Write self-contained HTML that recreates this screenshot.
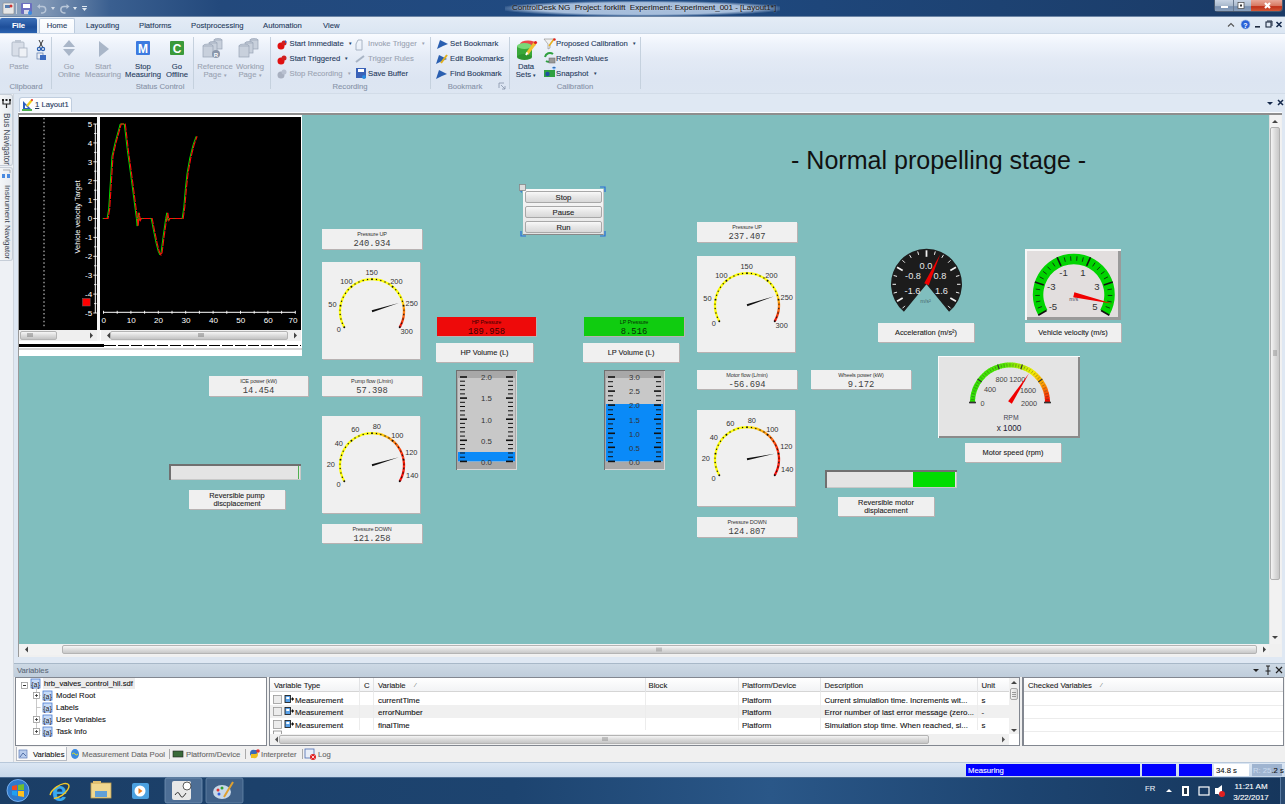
<!DOCTYPE html><html><head><meta charset="utf-8"><style>
html,body{margin:0;padding:0;width:1285px;height:804px;overflow:hidden;background:#dfe8f3;}
body{position:relative;font-family:"Liberation Sans",sans-serif;}
body>div,body>div>div{position:absolute;}
.b{-webkit-text-stroke:0.1px currentColor;}
</style></head><body>
<div style="left:0px;top:0px;width:1285px;height:17px;background:linear-gradient(90deg,#95a9c2 0px,#7a92b2 50px,#3a5f90 110px,#23497c 220px,#1f4a82 640px,#1d4272 1000px,#1a3a66 1285px);"></div>
<div style="left:505px;top:1px;width:275px;height:15px;background:radial-gradient(ellipse at center,rgba(190,210,235,0.85) 55%,rgba(150,180,215,0) 75%);"></div>
<div style="left:0px;top:16px;width:1285px;height:1px;background:#6d86a6;"></div>
<svg style="position:absolute;left:0px;top:0px;" width="120" height="17" viewBox="0 0 120 17">
<rect x="3" y="3" width="11" height="11" rx="1" fill="#e6e6e6" stroke="#8a8a8a" stroke-width="0.6"/>
<rect x="5" y="5" width="5" height="3" fill="#5a7fb0"/><circle cx="11" cy="6" r="1.5" fill="#c33"/>
<line x1="16.5" y1="3" x2="16.5" y2="14" stroke="#c8d2de" stroke-width="1"/>
<rect x="21" y="3" width="11" height="11" rx="1" fill="#6b6fc0"/><rect x="23" y="4" width="7" height="4" fill="#fff"/><rect x="24" y="10" width="5" height="4" fill="#d8d8e8"/><circle cx="30" cy="13" r="2" fill="#3a8ae0"/>
<path d="M39.5 6.5 h3 a3.2 3.2 0 0 1 0 6.4 h-1.5" fill="none" stroke="#b8c6d8" stroke-width="1.5"/><path d="M37 6.5 l3-2.6 v5.2z" fill="#b8c6d8"/>
<path d="M51 7 l4 0 l-2 3z" fill="#d0dae6"/>
<path d="M67 6.5 h-3 a3.2 3.2 0 0 0 0 6.4 h1.5" fill="none" stroke="#b8c6d8" stroke-width="1.5"/><path d="M69.5 6.5 l-3-2.6 v5.2z" fill="#b8c6d8"/>
<path d="M73 7 l4 0 l-2 3z" fill="#e0e8f0"/>
<rect x="82" y="6" width="5" height="1" fill="#e0e8f0"/><path d="M82 8 l5 0 l-2.5 3z" fill="#e0e8f0"/>
</svg>
<div style="left:1214px;top:0px;width:69px;height:12px;border:1px solid #4a5a70;border-top:none;border-radius:0 0 4px 4px;box-sizing:border-box;"></div>
<div style="left:1215px;top:0px;width:18px;height:11px;background:linear-gradient(#c8d4e4,#a8b8cc 55%,#7890b0 60%,#8aa0bc);"></div>
<div style="left:1233px;top:0px;width:1px;height:11px;background:#6a7a90;"></div>
<div style="left:1234px;top:0px;width:17px;height:11px;background:linear-gradient(#c8d4e4,#a8b8cc 55%,#7890b0 60%,#8aa0bc);"></div>
<div style="left:1251px;top:0px;width:31px;height:11px;background:linear-gradient(#e8a898,#d87a64 50%,#c03018 60%,#d05838);border-radius:0 0 3px 0;"></div>
<svg style="position:absolute;left:1214px;top:0px;" width="69" height="12" viewBox="0 0 69 12"><rect x="7" y="6" width="7" height="2" fill="#fff"/><rect x="24" y="2.5" width="6" height="6" fill="#fff" stroke="#444" stroke-width="0.7"/><rect x="26" y="4.5" width="2" height="2" fill="#333"/><path d="M51 3 l5 5 M56 3 l-5 5" stroke="#fff" stroke-width="2.2"/></svg>
<div class="b" style="left:512px;top:3px;font-size:8.0px;line-height:9.6px;color:#1a1a1a;text-align:left;white-space:nowrap;text-shadow:0 0 2px rgba(255,255,255,0.6);">ControlDesk NG&nbsp; Project: forklift&nbsp; Experiment: Experiment_001 - [Layout1*]</div>
<div style="left:0px;top:17px;width:1285px;height:17px;background:linear-gradient(#e4ecf6,#dae5f2);"></div>
<div style="left:0px;top:18px;width:37px;height:15px;background:linear-gradient(#3c6fb8,#1e4f9a 60%,#2a62b0);border-radius:2px 2px 0 0;"></div>
<div class="b" style="left:0px;top:18px;width:37px;font-size:7.7px;line-height:15px;color:#fff;text-align:center;white-space:nowrap;font-weight:bold;">File</div>
<div style="left:39px;top:18px;width:36px;height:16px;background:linear-gradient(#fdfeff,#f3f7fc);border:1px solid #bccbdd;border-bottom:none;border-radius:2px 2px 0 0;box-sizing:border-box;"></div>
<div class="b" style="left:39px;top:18px;width:36px;font-size:7.7px;line-height:16px;color:#1e395b;text-align:center;white-space:nowrap;">Home</div>
<div class="b" style="left:86px;top:18px;font-size:7.7px;line-height:16px;color:#1e395b;text-align:left;white-space:nowrap;">Layouting</div>
<div class="b" style="left:139px;top:18px;font-size:7.7px;line-height:16px;color:#1e395b;text-align:left;white-space:nowrap;">Platforms</div>
<div class="b" style="left:191px;top:18px;font-size:7.7px;line-height:16px;color:#1e395b;text-align:left;white-space:nowrap;">Postprocessing</div>
<div class="b" style="left:263px;top:18px;font-size:7.7px;line-height:16px;color:#1e395b;text-align:left;white-space:nowrap;">Automation</div>
<div class="b" style="left:323px;top:18px;font-size:7.7px;line-height:16px;color:#1e395b;text-align:left;white-space:nowrap;">View</div>
<svg style="position:absolute;left:1220px;top:18px;" width="65" height="14" viewBox="0 0 65 14"><path d="M8 8.5 l3-3 l3 3" fill="none" stroke="#555" stroke-width="1.1"/><circle cx="25.5" cy="6.5" r="4.5" fill="#2a62d8" stroke="#a8c0e8" stroke-width="0.6"/><text x="25.5" y="9.5" font-size="7" fill="#fff" text-anchor="middle" font-family="Liberation Sans" font-weight="bold">?</text><rect x="35" y="8" width="5" height="1.6" fill="#1e2a40"/><rect x="46" y="4" width="5" height="5" fill="none" stroke="#1e2a40" stroke-width="1.1"/><path d="M47 3 h5 v5" fill="none" stroke="#1e2a40" stroke-width="1"/><path d="M56.5 4 l5 5 M61.5 4 l-5 5" stroke="#15294b" stroke-width="1.5"/></svg>
<div style="left:0px;top:33px;width:1285px;height:61px;background:linear-gradient(#f9fbff 0px,#eef3fb 10px,#e3eaf5 25px,#dce5f2 45px,#dde6f2 61px);border-top:1px solid #ccd8e6;border-bottom:1px solid #d2dce8;box-sizing:border-box;"></div>
<div style="left:51px;top:37px;width:1px;height:52px;background:#c5d1de;"></div>
<div style="left:193px;top:37px;width:1px;height:52px;background:#c5d1de;"></div>
<div style="left:270px;top:37px;width:1px;height:52px;background:#c5d1de;"></div>
<div style="left:430px;top:37px;width:1px;height:52px;background:#c5d1de;"></div>
<div style="left:509px;top:37px;width:1px;height:52px;background:#c5d1de;"></div>
<div style="left:640px;top:37px;width:1px;height:52px;background:#c5d1de;"></div>
<div class="b" style="left:0px;top:62px;width:38px;font-size:7.7px;line-height:9.24px;color:#9aa3b2;text-align:center;white-space:nowrap;">Paste</div>
<div class="b" style="left:0px;top:82px;width:52px;font-size:7.7px;line-height:9.24px;color:#8793a8;text-align:center;white-space:nowrap;">Clipboard</div>
<svg style="position:absolute;left:8px;top:38px;" width="40" height="22" viewBox="0 0 40 22"><rect x="4" y="4" width="12" height="14" rx="1" fill="#d8dee8" stroke="#a8b2c0" stroke-width="0.8"/><rect x="7" y="2" width="6" height="3" fill="#c0c8d4"/><rect x="11" y="10" width="8" height="9" fill="#eef1f6" stroke="#a8b2c0" stroke-width="0.8"/><path d="M31 2 l4 8 M35 2 l-4 8" stroke="#333" stroke-width="1"/><circle cx="31" cy="11" r="1.6" fill="none" stroke="#2a5fb0" stroke-width="1.2"/><circle cx="35" cy="11" r="1.6" fill="none" stroke="#2a5fb0" stroke-width="1.2"/><rect x="29" y="15" width="6" height="6" fill="#e8ecf4" stroke="#5a78a8" stroke-width="0.7"/><rect x="32" y="17" width="6" height="5" fill="#3a6ac0"/></svg>
<svg style="position:absolute;left:55px;top:36px;" width="140" height="24" viewBox="0 0 140 24"><path d="M14 4 l6 7 l-12 0z" fill="#a9b6c8"/><path d="M8 13 l12 0 l-6 7z" fill="#a9b6c8"/>
<path d="M44 5 l10 8 l-10 8z" fill="#a9b6c8"/>
<rect x="81" y="5" width="14" height="14" rx="1" fill="#3d7ae0"/><text x="88" y="16.5" font-size="12" font-weight="bold" fill="#fff" text-anchor="middle" font-family="Liberation Sans">M</text>
<rect x="115" y="5" width="14" height="14" rx="1" fill="#3a9a3a"/><text x="122" y="16.5" font-size="12" font-weight="bold" fill="#fff" text-anchor="middle" font-family="Liberation Sans">C</text></svg>
<div class="b" style="left:52px;top:62.5px;width:34px;font-size:7.7px;line-height:8.4px;color:#9aa3b2;text-align:center;white-space:nowrap;">Go<br>Online</div>
<div class="b" style="left:84px;top:62.5px;width:38px;font-size:7.7px;line-height:8.4px;color:#9aa3b2;text-align:center;white-space:nowrap;">Start<br>Measuring</div>
<div class="b" style="left:124px;top:62.5px;width:38px;font-size:7.7px;line-height:8.4px;color:#1e395b;text-align:center;white-space:nowrap;">Stop<br>Measuring</div>
<div class="b" style="left:160px;top:62.5px;width:34px;font-size:7.7px;line-height:8.4px;color:#1e395b;text-align:center;white-space:nowrap;">Go<br>Offline</div>
<div class="b" style="left:110px;top:82px;width:100px;font-size:7.7px;line-height:9.24px;color:#8793a8;text-align:center;white-space:nowrap;">Status Control</div>
<svg style="position:absolute;left:198px;top:36px;" width="72" height="24" viewBox="0 0 72 24"><g fill="#c8d0dc" stroke="#98a4b6" stroke-width="0.7"><ellipse cx="20" cy="4" rx="4" ry="1.5"/><rect x="16" y="4" width="8" height="9"/><ellipse cx="15" cy="7" rx="4" ry="1.5"/><rect x="11" y="7" width="8" height="10"/><ellipse cx="10" cy="10" rx="5" ry="2"/><rect x="5" y="10" width="10" height="11"/></g><circle cx="18" cy="18" r="4" fill="#8a96aa"/><text x="18" y="21" font-size="6" fill="#fff" text-anchor="middle" font-family="Liberation Sans" font-weight="bold">R</text>
<g fill="#c8d0dc" stroke="#98a4b6" stroke-width="0.7"><ellipse cx="56" cy="4" rx="4" ry="1.5"/><rect x="52" y="4" width="8" height="9"/><ellipse cx="51" cy="7" rx="4" ry="1.5"/><rect x="47" y="7" width="8" height="10"/><ellipse cx="46" cy="10" rx="5" ry="2"/><rect x="41" y="10" width="10" height="11"/></g></svg>
<div class="b" style="left:196px;top:62.5px;width:38px;font-size:7.7px;line-height:8.4px;color:#9aa3b2;text-align:center;white-space:nowrap;">Reference<br>Page <span style="font-size:5px">▾</span></div>
<div class="b" style="left:231px;top:62.5px;width:38px;font-size:7.7px;line-height:8.4px;color:#9aa3b2;text-align:center;white-space:nowrap;">Working<br>Page <span style="font-size:5px">▾</span></div>
<svg style="position:absolute;left:272px;top:37px;" width="160" height="44" viewBox="0 0 160 44"><circle cx="9" cy="9" r="3.5" fill="#e01010"/><circle cx="12" cy="6" r="2.5" fill="#d02020"/><path d="M13 3 l2 2 l-2 1z" fill="#3060c0"/>
<circle cx="9" cy="24" r="3.5" fill="#e01010"/><circle cx="12" cy="21" r="2.5" fill="#d02020"/>
<circle cx="9" cy="38" r="3.5" fill="#a8b0c0"/><circle cx="12" cy="35" r="2.5" fill="#b8c0d0"/>
<path d="M86 3 l4 0 l0 10 l-6 0 l0-6z" fill="none" stroke="#a8b4c4" stroke-width="1"/>
<path d="M84 25 l8 -6" stroke="#a8b4c4" stroke-width="2"/>
<rect x="84" y="31" width="10" height="10" fill="#3a62b8"/><rect x="86" y="32" width="6" height="3" fill="#fff"/><circle cx="92" cy="40" r="2" fill="#2a8ae0"/></svg>
<div class="b" style="left:289.5px;top:39px;font-size:7.7px;line-height:9.24px;color:#1e395b;text-align:left;white-space:nowrap;">Start Immediate <span style="font-size:5px;vertical-align:1px;margin-left:3px">▾</span></div>
<div class="b" style="left:289.5px;top:54px;font-size:7.7px;line-height:9.24px;color:#1e395b;text-align:left;white-space:nowrap;">Start Triggered <span style="font-size:5px;vertical-align:1px;margin-left:3px">▾</span></div>
<div class="b" style="left:289.5px;top:68.8px;font-size:7.7px;line-height:9.24px;color:#9aa3b2;text-align:left;white-space:nowrap;">Stop Recording <span style="font-size:5px;vertical-align:1px;margin-left:3px">▾</span></div>
<div class="b" style="left:368px;top:39px;font-size:7.7px;line-height:9.24px;color:#9aa3b2;text-align:left;white-space:nowrap;">Invoke Trigger <span style="font-size:5px;vertical-align:1px;margin-left:3px">▾</span></div>
<div class="b" style="left:368px;top:54px;font-size:7.7px;line-height:9.24px;color:#9aa3b2;text-align:left;white-space:nowrap;">Trigger Rules</div>
<div class="b" style="left:368px;top:68.8px;font-size:7.7px;line-height:9.24px;color:#1e395b;text-align:left;white-space:nowrap;">Save Buffer</div>
<div class="b" style="left:300px;top:82px;width:100px;font-size:7.7px;line-height:9.24px;color:#8793a8;text-align:center;white-space:nowrap;">Recording</div>
<svg style="position:absolute;left:433px;top:37px;" width="16" height="44" viewBox="0 0 16 44"><path d="M4 12 l3-9 l8 4 l-5 2z" fill="#2a5fb0"/><path d="M3 27 l3-9 l8 4 l-5 2z" fill="#2a5fb0"/><path d="M8 26 l6-8" stroke="#e0b020" stroke-width="2"/><path d="M3 42 l3-9 l8 4 l-5 2z" fill="#2a5fb0"/></svg>
<div class="b" style="left:450px;top:39px;font-size:7.7px;line-height:9.24px;color:#1e395b;text-align:left;white-space:nowrap;">Set Bookmark</div>
<div class="b" style="left:450px;top:54px;font-size:7.7px;line-height:9.24px;color:#1e395b;text-align:left;white-space:nowrap;">Edit Bookmarks</div>
<div class="b" style="left:450px;top:68.8px;font-size:7.7px;line-height:9.24px;color:#1e395b;text-align:left;white-space:nowrap;">Find Bookmark</div>
<div class="b" style="left:430px;top:82px;width:70px;font-size:7.7px;line-height:9.24px;color:#8793a8;text-align:center;white-space:nowrap;">Bookmark</div>
<svg style="position:absolute;left:498px;top:82px;" width="8" height="8" viewBox="0 0 8 8"><path d="M1 1 h5 M1 1 v5 M3 3 l4 4 M7 4 v3 h-3" stroke="#8793a8" stroke-width="0.8" fill="none"/></svg>
<svg style="position:absolute;left:515px;top:37px;" width="125" height="44" viewBox="0 0 125 44"><ellipse cx="13" cy="7" rx="8" ry="3.5" fill="#e84848"/><rect x="2" y="9" width="15" height="11" fill="#3aa83a"/><ellipse cx="9.5" cy="20" rx="7.5" ry="3" fill="#2e942e"/><ellipse cx="9.5" cy="9" rx="7.5" ry="3" fill="#78d878"/><path d="M12 17 l8-11" stroke="#f0c030" stroke-width="3"/><path d="M11 18 l1.5-2.5" stroke="#fff" stroke-width="2"/><circle cx="20.5" cy="5.5" r="1.6" fill="#e02020"/>
<path d="M29 2 l10 0 l-4 5 l0 4 l-2 1 l0-5z" fill="#f0f0f0" stroke="#888" stroke-width="0.6"/><path d="M34 9 l5-7" stroke="#e8b020" stroke-width="1.5"/><circle cx="39.5" cy="2.5" r="1.2" fill="#e02020"/>
<path d="M30 20 a5 5 0 0 1 8 -3" fill="none" stroke="#30a040" stroke-width="2"/><path d="M38 22 a5 5 0 0 1 -7 2" fill="none" stroke="#30a040" stroke-width="2"/><rect x="34" y="21" width="6" height="5" fill="#999" stroke="#666" stroke-width="0.5"/>
<rect x="29" y="33" width="11" height="7" fill="#30a040"/><circle cx="32.5" cy="37" r="2.2" fill="#2050a0"/><path d="M37 30 l2 2 l2-2 M39 29 v4 M37 31 h4" stroke="#70b0ff" stroke-width="0.8"/></svg>
<div class="b" style="left:498px;top:62.5px;width:56px;font-size:7.7px;line-height:8.4px;color:#1e395b;text-align:center;white-space:nowrap;">Data<br>Sets <span style="font-size:5px">▾</span></div>
<div class="b" style="left:556px;top:39px;font-size:7.7px;line-height:9.24px;color:#1e395b;text-align:left;white-space:nowrap;">Proposed Calibration <span style="font-size:5px;vertical-align:1px;margin-left:3px">▾</span></div>
<div class="b" style="left:556px;top:54px;font-size:7.7px;line-height:9.24px;color:#1e395b;text-align:left;white-space:nowrap;">Refresh Values</div>
<div class="b" style="left:556px;top:68.8px;font-size:7.7px;line-height:9.24px;color:#1e395b;text-align:left;white-space:nowrap;">Snapshot <span style="font-size:5px;vertical-align:1px;margin-left:3px">▾</span></div>
<div class="b" style="left:540px;top:82px;width:70px;font-size:7.7px;line-height:9.24px;color:#8793a8;text-align:center;white-space:nowrap;">Calibration</div>
<div style="left:0px;top:94px;width:1285px;height:20px;background:#dfe8f3;"></div>
<div style="left:0px;top:94px;width:14px;height:668px;background:#eef1f5;border-right:1px solid #d0d6de;box-sizing:border-box;"></div>
<div style="left:0px;top:94px;width:13px;height:72px;background:linear-gradient(90deg,#f4f6f8,#e6eaef);border:1px solid #c6ced8;border-left:none;border-radius:0 3px 3px 0;box-sizing:border-box;"></div>
<div style="left:0px;top:167px;width:13px;height:94px;background:linear-gradient(90deg,#f4f6f8,#e6eaef);border:1px solid #c6ced8;border-left:none;border-radius:0 3px 3px 0;box-sizing:border-box;"></div>
<svg style="position:absolute;left:1px;top:98px;" width="11" height="11" viewBox="0 0 11 11"><path d="M2 2 v4 h7 v-4 M5.5 6 v4" stroke="#222" stroke-width="1.2" fill="none"/><rect x="1" y="1" width="2" height="2" fill="#222"/><rect x="4.5" y="1" width="2" height="2" fill="#222"/><rect x="8" y="1" width="2" height="2" fill="#222"/></svg>
<svg style="position:absolute;left:1px;top:169px;" width="11" height="11" viewBox="0 0 11 11"><rect x="1" y="5" width="3" height="4" fill="#4a8ae0"/><rect x="6" y="5" width="3" height="4" fill="#4a8ae0"/><path d="M2 1 h7 v3" stroke="#999" fill="none" stroke-width="0.8"/></svg>
<div style="left:1px;top:112.5px;width:12px;height:54px;"><div style="position:absolute;left:12px;top:0;transform-origin:0 0;transform:rotate(90deg);font-size:8.3px;line-height:12px;color:#3a4450;white-space:nowrap;">Bus Navigator</div></div>
<div style="left:1px;top:185px;width:12px;height:80px;"><div style="position:absolute;left:12px;top:0;transform-origin:0 0;transform:rotate(90deg);font-size:8.0px;line-height:12px;color:#3a4450;white-space:nowrap;">Instrument Navigator</div></div>
<div style="left:19px;top:97px;width:53px;height:17px;background:linear-gradient(#ffffff,#f6f9fd);border:1px solid #c0cedf;border-bottom:none;border-radius:3px 3px 0 0;box-sizing:border-box;"></div>
<svg style="position:absolute;left:22px;top:99px;" width="12" height="12" viewBox="0 0 12 12"><path d="M1 10 L1 2 L9 10 Z" fill="#2a5fc0"/><path d="M3 9 L3 6 L6 9Z" fill="#fff"/><rect x="0" y="10" width="10" height="2" fill="#50b050"/><path d="M5 7 L10 1" stroke="#f0d020" stroke-width="2.2"/><circle cx="10" cy="1" r="1" fill="#e03030"/></svg>
<div class="b" style="left:35px;top:98px;font-size:7.7px;line-height:14px;color:#1e395b;text-align:left;white-space:nowrap;"><u>1</u> Layout1</div>
<svg style="position:absolute;left:1265px;top:96px;" width="30" height="14" viewBox="0 0 30 14"><path d="M2 6 h6 l-3 3z" fill="#15294b"/><path d="M13 4 l5 5 M18 4 l-5 5" stroke="#15294b" stroke-width="1.5"/></svg>
<div style="left:14px;top:113px;width:1271px;height:550px;background:#dfe8f3;"></div>
<div style="left:18px;top:112px;width:1264px;height:1px;background:#fafcff;"></div>
<div style="left:18px;top:113px;width:1264px;height:544px;background:#f0f0f0;border-top:2px solid #8e8e8e;border-left:1px solid #9a9a9a;box-sizing:border-box;"></div>
<div style="left:19px;top:115px;width:1250px;height:529px;background:#80bebe;"></div>
<div style="left:1269px;top:115px;width:12px;height:529px;background:#f2f2f2;border-left:1px solid #e0e0e0;box-sizing:border-box;"></div>
<div style="left:1270px;top:127px;width:10px;height:453px;background:linear-gradient(90deg,#f4f4f4,#dcdcdc 50%,#c8c8c8);border:1px solid #b0b0b0;border-radius:2px;box-sizing:border-box;"></div>
<svg style="position:absolute;left:1269px;top:115px;" width="12" height="529" viewBox="0 0 12 529"><path d="M3 8 l3-3 l3 3z" fill="#444"/><path d="M3 521 l6 0 l-3 3z" fill="#444"/><path d="M4 236 h4 M4 238 h4 M4 240 h4" stroke="#777" stroke-width="0.7"/></svg>
<div style="left:19px;top:644px;width:1250px;height:11px;background:#f2f2f2;"></div>
<div style="left:62px;top:645px;width:1195px;height:9px;background:linear-gradient(#f6f6f6,#dedede 50%,#c8c8c8);border:1px solid #b4b4b4;border-radius:2px;box-sizing:border-box;"></div>
<svg style="position:absolute;left:19px;top:644px;" width="1250" height="11" viewBox="0 0 1250 11"><path d="M6 5.5 l3-3 l0 6z" fill="#444"/><path d="M1244 2.5 l3 3 l-3 3z" fill="#444"/><path d="M638 3.5 v4 M640 3.5 v4 M642 3.5 v4" stroke="#777" stroke-width="0.7"/></svg>
<div style="left:14px;top:657px;width:1271px;height:6px;background:#dfe8f3;"></div>
<div style="left:19px;top:115px;width:283px;height:241px;background:#fff;"></div>
<div style="left:19px;top:117px;width:79px;height:213px;background:#000;"></div>
<div style="left:100px;top:117px;width:201px;height:213px;background:#000;"></div>
<div style="left:97px;top:117px;width:3px;height:224px;background:#f4f4f4;"></div>
<svg style="position:absolute;left:19px;top:115px;" width="283" height="241" viewBox="0 0 283 241"><line x1="25" y1="3" x2="25" y2="213" stroke="#ddd" stroke-width="1" stroke-dasharray="1.5,2.4"/><line x1="76.3" y1="9.0" x2="76.3" y2="198.0" stroke="#fff" stroke-width="1"/><line x1="74.3" y1="198.0" x2="77.8" y2="198.0" stroke="#fff" stroke-width="0.9"/><line x1="75.1" y1="188.6" x2="77.5" y2="188.6" stroke="#fff" stroke-width="0.9"/><line x1="74.3" y1="179.1" x2="77.8" y2="179.1" stroke="#fff" stroke-width="0.9"/><line x1="75.1" y1="169.6" x2="77.5" y2="169.6" stroke="#fff" stroke-width="0.9"/><line x1="74.3" y1="160.2" x2="77.8" y2="160.2" stroke="#fff" stroke-width="0.9"/><line x1="75.1" y1="150.8" x2="77.5" y2="150.8" stroke="#fff" stroke-width="0.9"/><line x1="74.3" y1="141.3" x2="77.8" y2="141.3" stroke="#fff" stroke-width="0.9"/><line x1="75.1" y1="131.8" x2="77.5" y2="131.8" stroke="#fff" stroke-width="0.9"/><line x1="74.3" y1="122.4" x2="77.8" y2="122.4" stroke="#fff" stroke-width="0.9"/><line x1="75.1" y1="113.0" x2="77.5" y2="113.0" stroke="#fff" stroke-width="0.9"/><line x1="74.3" y1="103.5" x2="77.8" y2="103.5" stroke="#fff" stroke-width="0.9"/><line x1="75.1" y1="94.0" x2="77.5" y2="94.0" stroke="#fff" stroke-width="0.9"/><line x1="74.3" y1="84.6" x2="77.8" y2="84.6" stroke="#fff" stroke-width="0.9"/><line x1="75.1" y1="75.2" x2="77.5" y2="75.2" stroke="#fff" stroke-width="0.9"/><line x1="74.3" y1="65.7" x2="77.8" y2="65.7" stroke="#fff" stroke-width="0.9"/><line x1="75.1" y1="56.2" x2="77.5" y2="56.2" stroke="#fff" stroke-width="0.9"/><line x1="74.3" y1="46.8" x2="77.8" y2="46.8" stroke="#fff" stroke-width="0.9"/><line x1="75.1" y1="37.4" x2="77.5" y2="37.4" stroke="#fff" stroke-width="0.9"/><line x1="74.3" y1="27.9" x2="77.8" y2="27.9" stroke="#fff" stroke-width="0.9"/><line x1="75.1" y1="18.5" x2="77.5" y2="18.5" stroke="#fff" stroke-width="0.9"/><line x1="74.3" y1="9.0" x2="77.8" y2="9.0" stroke="#fff" stroke-width="0.9"/><text x="73.3" y="200.9" font-size="8.1" fill="#fff" text-anchor="end" font-family="Liberation Sans">-5</text><text x="73.3" y="182.0" font-size="8.1" fill="#fff" text-anchor="end" font-family="Liberation Sans">-4</text><text x="73.3" y="163.1" font-size="8.1" fill="#fff" text-anchor="end" font-family="Liberation Sans">-3</text><text x="73.3" y="144.2" font-size="8.1" fill="#fff" text-anchor="end" font-family="Liberation Sans">-2</text><text x="73.3" y="125.3" font-size="8.1" fill="#fff" text-anchor="end" font-family="Liberation Sans">-1</text><text x="73.3" y="106.4" font-size="8.1" fill="#fff" text-anchor="end" font-family="Liberation Sans">0</text><text x="73.3" y="87.5" font-size="8.1" fill="#fff" text-anchor="end" font-family="Liberation Sans">1</text><text x="73.3" y="68.6" font-size="8.1" fill="#fff" text-anchor="end" font-family="Liberation Sans">2</text><text x="73.3" y="49.7" font-size="8.1" fill="#fff" text-anchor="end" font-family="Liberation Sans">3</text><text x="73.3" y="30.8" font-size="8.1" fill="#fff" text-anchor="end" font-family="Liberation Sans">4</text><text x="73.3" y="11.9" font-size="8.1" fill="#fff" text-anchor="end" font-family="Liberation Sans">5</text><text transform="translate(61,102) rotate(-90)" font-size="7.4" fill="#fff" text-anchor="middle" font-family="Liberation Sans">Vehicle velocity Target</text><rect x="63.5" y="183.4" width="7.7" height="7.6" fill="#ff0000" stroke="#666" stroke-width="0.5"/><line x1="84.5" y1="197.3" x2="276.3" y2="197.3" stroke="#fff" stroke-width="1"/><line x1="84.5" y1="195.8" x2="84.5" y2="198.8" stroke="#fff" stroke-width="0.9"/><line x1="98.2" y1="195.8" x2="98.2" y2="198.8" stroke="#fff" stroke-width="0.9"/><line x1="111.9" y1="195.8" x2="111.9" y2="198.8" stroke="#fff" stroke-width="0.9"/><line x1="125.6" y1="195.8" x2="125.6" y2="198.8" stroke="#fff" stroke-width="0.9"/><line x1="139.3" y1="195.8" x2="139.3" y2="198.8" stroke="#fff" stroke-width="0.9"/><line x1="153.0" y1="195.8" x2="153.0" y2="198.8" stroke="#fff" stroke-width="0.9"/><line x1="166.7" y1="195.8" x2="166.7" y2="198.8" stroke="#fff" stroke-width="0.9"/><line x1="180.4" y1="195.8" x2="180.4" y2="198.8" stroke="#fff" stroke-width="0.9"/><line x1="194.1" y1="195.8" x2="194.1" y2="198.8" stroke="#fff" stroke-width="0.9"/><line x1="207.8" y1="195.8" x2="207.8" y2="198.8" stroke="#fff" stroke-width="0.9"/><line x1="221.5" y1="195.8" x2="221.5" y2="198.8" stroke="#fff" stroke-width="0.9"/><line x1="235.2" y1="195.8" x2="235.2" y2="198.8" stroke="#fff" stroke-width="0.9"/><line x1="248.9" y1="195.8" x2="248.9" y2="198.8" stroke="#fff" stroke-width="0.9"/><line x1="262.6" y1="195.8" x2="262.6" y2="198.8" stroke="#fff" stroke-width="0.9"/><line x1="276.3" y1="195.8" x2="276.3" y2="198.8" stroke="#fff" stroke-width="0.9"/><text x="84.8" y="208.10000000000002" font-size="8.1" fill="#fff" text-anchor="middle" font-family="Liberation Sans">0</text><text x="112.2" y="208.10000000000002" font-size="8.1" fill="#fff" text-anchor="middle" font-family="Liberation Sans">10</text><text x="139.6" y="208.10000000000002" font-size="8.1" fill="#fff" text-anchor="middle" font-family="Liberation Sans">20</text><text x="167.0" y="208.10000000000002" font-size="8.1" fill="#fff" text-anchor="middle" font-family="Liberation Sans">30</text><text x="194.4" y="208.10000000000002" font-size="8.1" fill="#fff" text-anchor="middle" font-family="Liberation Sans">40</text><text x="221.8" y="208.10000000000002" font-size="8.1" fill="#fff" text-anchor="middle" font-family="Liberation Sans">50</text><text x="249.2" y="208.10000000000002" font-size="8.1" fill="#fff" text-anchor="middle" font-family="Liberation Sans">60</text><text x="274.1" y="208.10000000000002" font-size="8.1" fill="#fff" text-anchor="middle" font-family="Liberation Sans">70</text><path d="M84.5,103.5 L88.9,103.5 L90.5,94.0 L93.8,41.1 L96.8,27.9 L102.0,9.0 L106.1,9.0 L109.2,35.5 L113.3,65.7 L118.2,103.5 L119.0,111.1 L120.1,97.8 L121.2,105.4 L122.3,103.5 L133.0,103.5 L135.2,114.8 L137.9,128.1 L140.1,136.6 L141.8,140.0 L142.9,137.5 L144.8,122.4 L147.5,103.5 L148.6,97.8 L149.7,105.4 L150.8,103.5 L164.0,103.5 L165.6,92.2 L167.2,73.3 L168.9,58.1 L171.6,43.0 L174.9,29.8 L177.9,21.3" fill="none" stroke="#00e000" stroke-width="1.0" transform="translate(-0.8,0)"/><path d="M84.5,103.5 L88.9,103.5 L90.5,94.0 L93.8,41.1 L96.8,27.9 L102.0,9.0 L106.1,9.0 L109.2,35.5 L113.3,65.7 L118.2,103.5 L119.0,111.1 L120.1,97.8 L121.2,105.4 L122.3,103.5 L133.0,103.5 L135.2,114.8 L137.9,128.1 L140.1,136.6 L141.8,140.0 L142.9,137.5 L144.8,122.4 L147.5,103.5 L148.6,97.8 L149.7,105.4 L150.8,103.5 L164.0,103.5 L165.6,92.2 L167.2,73.3 L168.9,58.1 L171.6,43.0 L174.9,29.8 L177.9,21.3" fill="none" stroke="#ff0a0a" stroke-width="1.1" stroke-dasharray="7,1" transform="translate(0.2,0)"/></svg>
<div style="left:19px;top:330px;width:78px;height:11px;background:#efefef;"></div>
<div style="left:20px;top:331px;width:37px;height:9px;background:linear-gradient(#f6f6f6,#dcdcdc 50%,#c4c4c4);border:1px solid #b4b4b4;border-radius:2px;box-sizing:border-box;"></div>
<div style="left:101px;top:330px;width:200px;height:11px;background:#efefef;"></div>
<div style="left:110px;top:331px;width:178px;height:9px;background:linear-gradient(#f6f6f6,#dcdcdc 50%,#c4c4c4);border:1px solid #b4b4b4;border-radius:2px;box-sizing:border-box;"></div>
<svg style="position:absolute;left:19px;top:330px;" width="283" height="11" viewBox="0 0 283 11"><path d="M9 3 v4 M11 3 v4 M13 3 v4" stroke="#666" stroke-width="0.8"/><path d="M71 2.5 l3 3 l-3 3z" fill="#444"/><path d="M88 5.5 l3-3 v6z" fill="#444"/><path d="M180 3 v4 M182 3 v4 M184 3 v4" stroke="#666" stroke-width="0.8"/><path d="M275 2.5 l3 3 l-3 3z" fill="#444"/></svg>
<div style="left:19px;top:344px;width:85px;height:3px;background:#000;"></div>
<div style="left:104px;top:345px;width:197px;height:1px;background:#000;"></div>
<svg style="position:absolute;left:104px;top:344px;" width="197" height="3" viewBox="0 0 197 3"><rect x="12" y="0" width="2" height="3" fill="#fff"/><rect x="25" y="0" width="2" height="3" fill="#fff"/><rect x="38" y="0" width="2" height="3" fill="#fff"/><rect x="51" y="0" width="2" height="3" fill="#fff"/><rect x="64" y="0" width="2" height="3" fill="#fff"/><rect x="77" y="0" width="2" height="3" fill="#fff"/><rect x="90" y="0" width="2" height="3" fill="#fff"/><rect x="103" y="0" width="2" height="3" fill="#fff"/><rect x="116" y="0" width="2" height="3" fill="#fff"/><rect x="129" y="0" width="2" height="3" fill="#fff"/><rect x="142" y="0" width="2" height="3" fill="#fff"/><rect x="155" y="0" width="2" height="3" fill="#fff"/><rect x="168" y="0" width="2" height="3" fill="#fff"/><rect x="181" y="0" width="2" height="3" fill="#fff"/><rect x="194" y="0" width="2" height="3" fill="#fff"/></svg>
<div style="left:19px;top:348px;width:283px;height:2px;background:#d4d4d4;"></div>
<div style="left:322px;top:229px;width:100px;height:20px;background:#f0f0f0;box-shadow:1px 1px 0 #b8b2b2;"></div>
<div style="left:322px;top:230.5px;width:100px;font-size:5.5px;line-height:6px;color:#333;text-align:center;white-space:nowrap;letter-spacing:-0.15px;">Pressure UP</div>
<div style="left:322px;top:238.6px;width:100px;font-size:8.8px;line-height:11px;color:#404040;text-align:center;white-space:nowrap;font-family:'Liberation Mono',monospace;">240.934</div>
<div style="left:322px;top:262px;width:98px;height:97px;background:#f0f0f0;box-shadow:1px 1px 0 #b8b2b2;"></div>
<svg style="position:absolute;left:322px;top:262px;" width="98" height="97" viewBox="0 0 98 97"><path d="M22.29,65.20 A32,32 0 0 1 21.24,63.23" stroke="#ffff00" stroke-width="2.3" fill="none"/><path d="M21.24,63.23 A32,32 0 0 1 20.33,61.19" stroke="#ffff00" stroke-width="2.3" fill="none"/><path d="M20.33,61.19 A32,32 0 0 1 19.57,59.09" stroke="#ffff00" stroke-width="2.3" fill="none"/><path d="M19.57,59.09 A32,32 0 0 1 18.95,56.94" stroke="#ffff00" stroke-width="2.3" fill="none"/><path d="M18.95,56.94 A32,32 0 0 1 18.49,54.76" stroke="#ffff00" stroke-width="2.3" fill="none"/><path d="M18.49,54.76 A32,32 0 0 1 18.18,52.54" stroke="#ffff00" stroke-width="2.3" fill="none"/><path d="M18.18,52.54 A32,32 0 0 1 18.02,50.32" stroke="#ffff00" stroke-width="2.3" fill="none"/><path d="M18.02,50.32 A32,32 0 0 1 18.02,48.08" stroke="#ffff00" stroke-width="2.3" fill="none"/><path d="M18.02,48.08 A32,32 0 0 1 18.18,45.86" stroke="#ffff00" stroke-width="2.3" fill="none"/><path d="M18.18,45.86 A32,32 0 0 1 18.49,43.64" stroke="#ffff00" stroke-width="2.3" fill="none"/><path d="M18.49,43.64 A32,32 0 0 1 18.95,41.46" stroke="#ffff00" stroke-width="2.3" fill="none"/><path d="M18.95,41.46 A32,32 0 0 1 19.57,39.31" stroke="#ffff00" stroke-width="2.3" fill="none"/><path d="M19.57,39.31 A32,32 0 0 1 20.33,37.21" stroke="#ffff00" stroke-width="2.3" fill="none"/><path d="M20.33,37.21 A32,32 0 0 1 21.24,35.17" stroke="#ffff00" stroke-width="2.3" fill="none"/><path d="M21.24,35.17 A32,32 0 0 1 22.29,33.20" stroke="#ffff00" stroke-width="2.3" fill="none"/><path d="M22.29,33.20 A32,32 0 0 1 23.47,31.31" stroke="#ffff00" stroke-width="2.3" fill="none"/><path d="M23.47,31.31 A32,32 0 0 1 24.78,29.50" stroke="#ffff00" stroke-width="2.3" fill="none"/><path d="M24.78,29.50 A32,32 0 0 1 26.22,27.79" stroke="#ffff00" stroke-width="2.3" fill="none"/><path d="M26.22,27.79 A32,32 0 0 1 27.77,26.18" stroke="#ffff00" stroke-width="2.3" fill="none"/><path d="M27.77,26.18 A32,32 0 0 1 29.43,24.69" stroke="#ffff00" stroke-width="2.3" fill="none"/><path d="M29.43,24.69 A32,32 0 0 1 31.19,23.31" stroke="#ffff00" stroke-width="2.3" fill="none"/><path d="M31.19,23.31 A32,32 0 0 1 33.04,22.06" stroke="#ffff00" stroke-width="2.3" fill="none"/><path d="M33.04,22.06 A32,32 0 0 1 34.98,20.95" stroke="#ffff00" stroke-width="2.3" fill="none"/><path d="M34.98,20.95 A32,32 0 0 1 36.98,19.97" stroke="#ffff00" stroke-width="2.3" fill="none"/><path d="M36.98,19.97 A32,32 0 0 1 39.06,19.13" stroke="#ffff00" stroke-width="2.3" fill="none"/><path d="M39.06,19.13 A32,32 0 0 1 41.18,18.44" stroke="#ffff00" stroke-width="2.3" fill="none"/><path d="M41.18,18.44 A32,32 0 0 1 43.35,17.90" stroke="#ffff00" stroke-width="2.3" fill="none"/><path d="M43.35,17.90 A32,32 0 0 1 45.55,17.51" stroke="#ffff00" stroke-width="2.3" fill="none"/><path d="M45.55,17.51 A32,32 0 0 1 47.77,17.28" stroke="#ffff00" stroke-width="2.3" fill="none"/><path d="M47.77,17.28 A32,32 0 0 1 50.00,17.20" stroke="#ffff00" stroke-width="2.3" fill="none"/><path d="M50.00,17.20 A32,32 0 0 1 52.23,17.28" stroke="#ffff00" stroke-width="2.3" fill="none"/><path d="M52.23,17.28 A32,32 0 0 1 54.45,17.51" stroke="#ffff00" stroke-width="2.3" fill="none"/><path d="M54.45,17.51 A32,32 0 0 1 56.65,17.90" stroke="#ffff00" stroke-width="2.3" fill="none"/><path d="M56.65,17.90 A32,32 0 0 1 58.82,18.44" stroke="#ffff00" stroke-width="2.3" fill="none"/><path d="M58.82,18.44 A32,32 0 0 1 60.94,19.13" stroke="#ffff00" stroke-width="2.3" fill="none"/><path d="M60.94,19.13 A32,32 0 0 1 63.02,19.97" stroke="#ffff00" stroke-width="2.3" fill="none"/><path d="M63.02,19.97 A32,32 0 0 1 65.02,20.95" stroke="#ffff00" stroke-width="2.3" fill="none"/><path d="M65.02,20.95 A32,32 0 0 1 66.96,22.06" stroke="#ffff00" stroke-width="2.3" fill="none"/><path d="M66.96,22.06 A32,32 0 0 1 68.81,23.31" stroke="#ffff00" stroke-width="2.3" fill="none"/><path d="M68.81,23.31 A32,32 0 0 1 70.57,24.69" stroke="#ffff00" stroke-width="2.3" fill="none"/><path d="M70.57,24.69 A32,32 0 0 1 72.23,26.18" stroke="#ffff00" stroke-width="2.3" fill="none"/><path d="M72.23,26.18 A32,32 0 0 1 73.78,27.79" stroke="#ffff00" stroke-width="2.3" fill="none"/><path d="M73.78,27.79 A32,32 0 0 1 75.22,29.50" stroke="#ffff00" stroke-width="2.3" fill="none"/><path d="M75.22,29.50 A32,32 0 0 1 76.53,31.31" stroke="#ffff00" stroke-width="2.3" fill="none"/><path d="M76.53,31.31 A32,32 0 0 1 77.71,33.20" stroke="#ffff00" stroke-width="2.3" fill="none"/><path d="M77.71,33.20 A32,32 0 0 1 78.76,35.17" stroke="#ffff00" stroke-width="2.3" fill="none"/><path d="M78.76,35.17 A32,32 0 0 1 79.67,37.21" stroke="#ffff00" stroke-width="2.3" fill="none"/><path d="M79.67,37.21 A32,32 0 0 1 80.43,39.31" stroke="#ffee00" stroke-width="2.3" fill="none"/><path d="M80.43,39.31 A32,32 0 0 1 81.05,41.46" stroke="#ffd600" stroke-width="2.3" fill="none"/><path d="M81.05,41.46 A32,32 0 0 1 81.51,43.64" stroke="#ffbe00" stroke-width="2.3" fill="none"/><path d="M81.51,43.64 A32,32 0 0 1 81.82,45.86" stroke="#ffa600" stroke-width="2.3" fill="none"/><path d="M81.82,45.86 A32,32 0 0 1 81.98,48.08" stroke="#ff8e00" stroke-width="2.3" fill="none"/><path d="M81.98,48.08 A32,32 0 0 1 81.98,50.32" stroke="#fc7c00" stroke-width="2.3" fill="none"/><path d="M81.98,50.32 A32,32 0 0 1 81.82,52.54" stroke="#f96c00" stroke-width="2.3" fill="none"/><path d="M81.82,52.54 A32,32 0 0 1 81.51,54.76" stroke="#f65b00" stroke-width="2.3" fill="none"/><path d="M81.51,54.76 A32,32 0 0 1 81.05,56.94" stroke="#f34a00" stroke-width="2.3" fill="none"/><path d="M81.05,56.94 A32,32 0 0 1 80.43,59.09" stroke="#f03a00" stroke-width="2.3" fill="none"/><path d="M80.43,59.09 A32,32 0 0 1 79.67,61.19" stroke="#ed2900" stroke-width="2.3" fill="none"/><path d="M79.67,61.19 A32,32 0 0 1 78.76,63.23" stroke="#ea1900" stroke-width="2.3" fill="none"/><path d="M78.76,63.23 A32,32 0 0 1 77.71,65.20" stroke="#e70800" stroke-width="2.3" fill="none"/><circle cx="22.29" cy="65.20" r="0.95" fill="#111"/><circle cx="20.33" cy="61.19" r="0.7" fill="#111"/><circle cx="18.95" cy="56.94" r="0.7" fill="#111"/><circle cx="18.18" cy="52.54" r="0.7" fill="#111"/><circle cx="18.02" cy="48.08" r="0.7" fill="#111"/><circle cx="18.49" cy="43.64" r="0.95" fill="#111"/><circle cx="19.57" cy="39.31" r="0.7" fill="#111"/><circle cx="21.24" cy="35.17" r="0.7" fill="#111"/><circle cx="23.47" cy="31.31" r="0.7" fill="#111"/><circle cx="26.22" cy="27.79" r="0.7" fill="#111"/><circle cx="29.43" cy="24.69" r="0.95" fill="#111"/><circle cx="33.04" cy="22.06" r="0.7" fill="#111"/><circle cx="36.98" cy="19.97" r="0.7" fill="#111"/><circle cx="41.18" cy="18.44" r="0.7" fill="#111"/><circle cx="45.55" cy="17.51" r="0.7" fill="#111"/><circle cx="50.00" cy="17.20" r="0.95" fill="#111"/><circle cx="54.45" cy="17.51" r="0.7" fill="#111"/><circle cx="58.82" cy="18.44" r="0.7" fill="#111"/><circle cx="63.02" cy="19.97" r="0.7" fill="#111"/><circle cx="66.96" cy="22.06" r="0.7" fill="#111"/><circle cx="70.57" cy="24.69" r="0.95" fill="#111"/><circle cx="73.78" cy="27.79" r="0.7" fill="#111"/><circle cx="76.53" cy="31.31" r="0.7" fill="#111"/><circle cx="78.76" cy="35.17" r="0.7" fill="#111"/><circle cx="80.43" cy="39.31" r="0.7" fill="#111"/><circle cx="81.51" cy="43.64" r="0.95" fill="#111"/><circle cx="81.98" cy="48.08" r="0.7" fill="#111"/><circle cx="81.82" cy="52.54" r="0.7" fill="#111"/><circle cx="81.05" cy="56.94" r="0.7" fill="#111"/><circle cx="79.67" cy="61.19" r="0.7" fill="#111"/><circle cx="77.71" cy="65.20" r="0.95" fill="#111"/><text x="16.9" y="69.7" font-size="7.4" fill="#333" text-anchor="middle" font-family="Liberation Sans">0</text><text x="10.4" y="44.9" font-size="7.4" fill="#333" text-anchor="middle" font-family="Liberation Sans">50</text><text x="24.4" y="21.6" font-size="7.4" fill="#333" text-anchor="middle" font-family="Liberation Sans">100</text><text x="49.6" y="12.8" font-size="7.4" fill="#333" text-anchor="middle" font-family="Liberation Sans">150</text><text x="74.4" y="21.6" font-size="7.4" fill="#333" text-anchor="middle" font-family="Liberation Sans">200</text><text x="89.7" y="44.2" font-size="7.4" fill="#333" text-anchor="middle" font-family="Liberation Sans">250</text><text x="84.6" y="71.6" font-size="7.4" fill="#333" text-anchor="middle" font-family="Liberation Sans">300</text><path d="M49.71,48.24 L76.78,41.01 L50.29,50.16 Z" fill="#111"/></svg>
<div style="left:209px;top:376px;width:99px;height:20px;background:#f0f0f0;box-shadow:1px 1px 0 #b8b2b2;"></div>
<div style="left:209px;top:377.5px;width:99px;font-size:5.5px;line-height:6px;color:#333;text-align:center;white-space:nowrap;letter-spacing:-0.15px;">ICE power (kW)</div>
<div style="left:209px;top:385.6px;width:99px;font-size:8.8px;line-height:11px;color:#404040;text-align:center;white-space:nowrap;font-family:'Liberation Mono',monospace;">14.454</div>
<div style="left:322px;top:376px;width:100px;height:20px;background:#f0f0f0;box-shadow:1px 1px 0 #b8b2b2;"></div>
<div style="left:322px;top:377.5px;width:100px;font-size:5.5px;line-height:6px;color:#333;text-align:center;white-space:nowrap;letter-spacing:-0.15px;">Pump flow (L/min)</div>
<div style="left:322px;top:385.6px;width:100px;font-size:8.8px;line-height:11px;color:#404040;text-align:center;white-space:nowrap;font-family:'Liberation Mono',monospace;">57.398</div>
<div style="left:322px;top:416px;width:98px;height:97px;background:#f0f0f0;box-shadow:1px 1px 0 #b8b2b2;"></div>
<svg style="position:absolute;left:322px;top:416px;" width="98" height="97" viewBox="0 0 98 97"><path d="M22.29,65.20 A32,32 0 0 1 21.24,63.23" stroke="#ffff00" stroke-width="2.3" fill="none"/><path d="M21.24,63.23 A32,32 0 0 1 20.33,61.19" stroke="#ffff00" stroke-width="2.3" fill="none"/><path d="M20.33,61.19 A32,32 0 0 1 19.57,59.09" stroke="#ffff00" stroke-width="2.3" fill="none"/><path d="M19.57,59.09 A32,32 0 0 1 18.95,56.94" stroke="#ffff00" stroke-width="2.3" fill="none"/><path d="M18.95,56.94 A32,32 0 0 1 18.49,54.76" stroke="#ffff00" stroke-width="2.3" fill="none"/><path d="M18.49,54.76 A32,32 0 0 1 18.18,52.54" stroke="#ffff00" stroke-width="2.3" fill="none"/><path d="M18.18,52.54 A32,32 0 0 1 18.02,50.32" stroke="#ffff00" stroke-width="2.3" fill="none"/><path d="M18.02,50.32 A32,32 0 0 1 18.02,48.08" stroke="#ffff00" stroke-width="2.3" fill="none"/><path d="M18.02,48.08 A32,32 0 0 1 18.18,45.86" stroke="#ffff00" stroke-width="2.3" fill="none"/><path d="M18.18,45.86 A32,32 0 0 1 18.49,43.64" stroke="#ffff00" stroke-width="2.3" fill="none"/><path d="M18.49,43.64 A32,32 0 0 1 18.95,41.46" stroke="#ffff00" stroke-width="2.3" fill="none"/><path d="M18.95,41.46 A32,32 0 0 1 19.57,39.31" stroke="#ffff00" stroke-width="2.3" fill="none"/><path d="M19.57,39.31 A32,32 0 0 1 20.33,37.21" stroke="#ffff00" stroke-width="2.3" fill="none"/><path d="M20.33,37.21 A32,32 0 0 1 21.24,35.17" stroke="#ffff00" stroke-width="2.3" fill="none"/><path d="M21.24,35.17 A32,32 0 0 1 22.29,33.20" stroke="#ffff00" stroke-width="2.3" fill="none"/><path d="M22.29,33.20 A32,32 0 0 1 23.47,31.31" stroke="#ffff00" stroke-width="2.3" fill="none"/><path d="M23.47,31.31 A32,32 0 0 1 24.78,29.50" stroke="#ffff00" stroke-width="2.3" fill="none"/><path d="M24.78,29.50 A32,32 0 0 1 26.22,27.79" stroke="#ffff00" stroke-width="2.3" fill="none"/><path d="M26.22,27.79 A32,32 0 0 1 27.77,26.18" stroke="#ffff00" stroke-width="2.3" fill="none"/><path d="M27.77,26.18 A32,32 0 0 1 29.43,24.69" stroke="#ffff00" stroke-width="2.3" fill="none"/><path d="M29.43,24.69 A32,32 0 0 1 31.19,23.31" stroke="#ffff00" stroke-width="2.3" fill="none"/><path d="M31.19,23.31 A32,32 0 0 1 33.04,22.06" stroke="#ffff00" stroke-width="2.3" fill="none"/><path d="M33.04,22.06 A32,32 0 0 1 34.98,20.95" stroke="#ffff00" stroke-width="2.3" fill="none"/><path d="M34.98,20.95 A32,32 0 0 1 36.98,19.97" stroke="#ffff00" stroke-width="2.3" fill="none"/><path d="M36.98,19.97 A32,32 0 0 1 39.06,19.13" stroke="#ffff00" stroke-width="2.3" fill="none"/><path d="M39.06,19.13 A32,32 0 0 1 41.18,18.44" stroke="#ffff00" stroke-width="2.3" fill="none"/><path d="M41.18,18.44 A32,32 0 0 1 43.35,17.90" stroke="#ffff00" stroke-width="2.3" fill="none"/><path d="M43.35,17.90 A32,32 0 0 1 45.55,17.51" stroke="#ffff00" stroke-width="2.3" fill="none"/><path d="M45.55,17.51 A32,32 0 0 1 47.77,17.28" stroke="#ffff00" stroke-width="2.3" fill="none"/><path d="M47.77,17.28 A32,32 0 0 1 50.00,17.20" stroke="#ffff00" stroke-width="2.3" fill="none"/><path d="M50.00,17.20 A32,32 0 0 1 52.23,17.28" stroke="#fff900" stroke-width="2.3" fill="none"/><path d="M52.23,17.28 A32,32 0 0 1 54.45,17.51" stroke="#ffed00" stroke-width="2.3" fill="none"/><path d="M54.45,17.51 A32,32 0 0 1 56.65,17.90" stroke="#ffe100" stroke-width="2.3" fill="none"/><path d="M56.65,17.90 A32,32 0 0 1 58.82,18.44" stroke="#ffd500" stroke-width="2.3" fill="none"/><path d="M58.82,18.44 A32,32 0 0 1 60.94,19.13" stroke="#ffc900" stroke-width="2.3" fill="none"/><path d="M60.94,19.13 A32,32 0 0 1 63.02,19.97" stroke="#ffbe00" stroke-width="2.3" fill="none"/><path d="M63.02,19.97 A32,32 0 0 1 65.02,20.95" stroke="#ffb200" stroke-width="2.3" fill="none"/><path d="M65.02,20.95 A32,32 0 0 1 66.96,22.06" stroke="#fea500" stroke-width="2.3" fill="none"/><path d="M66.96,22.06 A32,32 0 0 1 68.81,23.31" stroke="#fd9800" stroke-width="2.3" fill="none"/><path d="M68.81,23.31 A32,32 0 0 1 70.57,24.69" stroke="#fc8a00" stroke-width="2.3" fill="none"/><path d="M70.57,24.69 A32,32 0 0 1 72.23,26.18" stroke="#fb7d00" stroke-width="2.3" fill="none"/><path d="M72.23,26.18 A32,32 0 0 1 73.78,27.79" stroke="#fa6f00" stroke-width="2.3" fill="none"/><path d="M73.78,27.79 A32,32 0 0 1 75.22,29.50" stroke="#f96200" stroke-width="2.3" fill="none"/><path d="M75.22,29.50 A32,32 0 0 1 76.53,31.31" stroke="#f85400" stroke-width="2.3" fill="none"/><path d="M76.53,31.31 A32,32 0 0 1 77.71,33.20" stroke="#f74700" stroke-width="2.3" fill="none"/><path d="M77.71,33.20 A32,32 0 0 1 78.76,35.17" stroke="#f63900" stroke-width="2.3" fill="none"/><path d="M78.76,35.17 A32,32 0 0 1 79.67,37.21" stroke="#f52c00" stroke-width="2.3" fill="none"/><path d="M79.67,37.21 A32,32 0 0 1 80.43,39.31" stroke="#f42500" stroke-width="2.3" fill="none"/><path d="M80.43,39.31 A32,32 0 0 1 81.05,41.46" stroke="#f42200" stroke-width="2.3" fill="none"/><path d="M81.05,41.46 A32,32 0 0 1 81.51,43.64" stroke="#f31f00" stroke-width="2.3" fill="none"/><path d="M81.51,43.64 A32,32 0 0 1 81.82,45.86" stroke="#f31c00" stroke-width="2.3" fill="none"/><path d="M81.82,45.86 A32,32 0 0 1 81.98,48.08" stroke="#f31900" stroke-width="2.3" fill="none"/><path d="M81.98,48.08 A32,32 0 0 1 81.98,50.32" stroke="#f21600" stroke-width="2.3" fill="none"/><path d="M81.98,50.32 A32,32 0 0 1 81.82,52.54" stroke="#f21300" stroke-width="2.3" fill="none"/><path d="M81.82,52.54 A32,32 0 0 1 81.51,54.76" stroke="#f21000" stroke-width="2.3" fill="none"/><path d="M81.51,54.76 A32,32 0 0 1 81.05,56.94" stroke="#f10d00" stroke-width="2.3" fill="none"/><path d="M81.05,56.94 A32,32 0 0 1 80.43,59.09" stroke="#f10a00" stroke-width="2.3" fill="none"/><path d="M80.43,59.09 A32,32 0 0 1 79.67,61.19" stroke="#f00700" stroke-width="2.3" fill="none"/><path d="M79.67,61.19 A32,32 0 0 1 78.76,63.23" stroke="#f00400" stroke-width="2.3" fill="none"/><path d="M78.76,63.23 A32,32 0 0 1 77.71,65.20" stroke="#f00100" stroke-width="2.3" fill="none"/><circle cx="22.29" cy="65.20" r="0.95" fill="#111"/><circle cx="20.33" cy="61.19" r="0.7" fill="#111"/><circle cx="18.95" cy="56.94" r="0.7" fill="#111"/><circle cx="18.18" cy="52.54" r="0.7" fill="#111"/><circle cx="18.02" cy="48.08" r="0.7" fill="#111"/><circle cx="18.49" cy="43.64" r="0.95" fill="#111"/><circle cx="19.57" cy="39.31" r="0.7" fill="#111"/><circle cx="21.24" cy="35.17" r="0.7" fill="#111"/><circle cx="23.47" cy="31.31" r="0.7" fill="#111"/><circle cx="26.22" cy="27.79" r="0.7" fill="#111"/><circle cx="29.43" cy="24.69" r="0.95" fill="#111"/><circle cx="33.04" cy="22.06" r="0.7" fill="#111"/><circle cx="36.98" cy="19.97" r="0.7" fill="#111"/><circle cx="41.18" cy="18.44" r="0.7" fill="#111"/><circle cx="45.55" cy="17.51" r="0.7" fill="#111"/><circle cx="50.00" cy="17.20" r="0.95" fill="#111"/><circle cx="54.45" cy="17.51" r="0.7" fill="#111"/><circle cx="58.82" cy="18.44" r="0.7" fill="#111"/><circle cx="63.02" cy="19.97" r="0.7" fill="#111"/><circle cx="66.96" cy="22.06" r="0.7" fill="#111"/><circle cx="70.57" cy="24.69" r="0.95" fill="#111"/><circle cx="73.78" cy="27.79" r="0.7" fill="#111"/><circle cx="76.53" cy="31.31" r="0.7" fill="#111"/><circle cx="78.76" cy="35.17" r="0.7" fill="#111"/><circle cx="80.43" cy="39.31" r="0.7" fill="#111"/><circle cx="81.51" cy="43.64" r="0.95" fill="#111"/><circle cx="81.98" cy="48.08" r="0.7" fill="#111"/><circle cx="81.82" cy="52.54" r="0.7" fill="#111"/><circle cx="81.05" cy="56.94" r="0.7" fill="#111"/><circle cx="79.67" cy="61.19" r="0.7" fill="#111"/><circle cx="77.71" cy="65.20" r="0.95" fill="#111"/><text x="16.5" y="71.0" font-size="7.4" fill="#333" text-anchor="middle" font-family="Liberation Sans">0</text><text x="8.8" y="50.6" font-size="7.4" fill="#333" text-anchor="middle" font-family="Liberation Sans">20</text><text x="16.8" y="29.9" font-size="7.4" fill="#333" text-anchor="middle" font-family="Liberation Sans">40</text><text x="33.3" y="15.9" font-size="7.4" fill="#333" text-anchor="middle" font-family="Liberation Sans">60</text><text x="54.8" y="12.7" font-size="7.4" fill="#333" text-anchor="middle" font-family="Liberation Sans">80</text><text x="75.3" y="21.5" font-size="7.4" fill="#333" text-anchor="middle" font-family="Liberation Sans">100</text><text x="89.3" y="39.2" font-size="7.4" fill="#333" text-anchor="middle" font-family="Liberation Sans">120</text><text x="90.2" y="61.6" font-size="7.4" fill="#333" text-anchor="middle" font-family="Liberation Sans">140</text><path d="M49.72,48.24 L76.85,41.25 L50.28,50.16 Z" fill="#111"/></svg>
<div style="left:322px;top:524px;width:100px;height:19px;background:#f0f0f0;box-shadow:1px 1px 0 #b8b2b2;"></div>
<div style="left:322px;top:525.5px;width:100px;font-size:5.5px;line-height:6px;color:#333;text-align:center;white-space:nowrap;letter-spacing:-0.15px;">Pressure DOWN</div>
<div style="left:322px;top:533.6px;width:100px;font-size:8.8px;line-height:11px;color:#404040;text-align:center;white-space:nowrap;font-family:'Liberation Mono',monospace;">121.258</div>
<div style="left:697px;top:222px;width:100px;height:20px;background:#f0f0f0;box-shadow:1px 1px 0 #b8b2b2;"></div>
<div style="left:697px;top:223.5px;width:100px;font-size:5.5px;line-height:6px;color:#333;text-align:center;white-space:nowrap;letter-spacing:-0.15px;">Pressure UP</div>
<div style="left:697px;top:231.6px;width:100px;font-size:8.8px;line-height:11px;color:#404040;text-align:center;white-space:nowrap;font-family:'Liberation Mono',monospace;">237.407</div>
<div style="left:697px;top:256px;width:98px;height:96px;background:#f0f0f0;box-shadow:1px 1px 0 #b8b2b2;"></div>
<svg style="position:absolute;left:697px;top:256px;" width="98" height="96" viewBox="0 0 98 96"><path d="M22.29,65.20 A32,32 0 0 1 21.24,63.23" stroke="#ffff00" stroke-width="2.3" fill="none"/><path d="M21.24,63.23 A32,32 0 0 1 20.33,61.19" stroke="#ffff00" stroke-width="2.3" fill="none"/><path d="M20.33,61.19 A32,32 0 0 1 19.57,59.09" stroke="#ffff00" stroke-width="2.3" fill="none"/><path d="M19.57,59.09 A32,32 0 0 1 18.95,56.94" stroke="#ffff00" stroke-width="2.3" fill="none"/><path d="M18.95,56.94 A32,32 0 0 1 18.49,54.76" stroke="#ffff00" stroke-width="2.3" fill="none"/><path d="M18.49,54.76 A32,32 0 0 1 18.18,52.54" stroke="#ffff00" stroke-width="2.3" fill="none"/><path d="M18.18,52.54 A32,32 0 0 1 18.02,50.32" stroke="#ffff00" stroke-width="2.3" fill="none"/><path d="M18.02,50.32 A32,32 0 0 1 18.02,48.08" stroke="#ffff00" stroke-width="2.3" fill="none"/><path d="M18.02,48.08 A32,32 0 0 1 18.18,45.86" stroke="#ffff00" stroke-width="2.3" fill="none"/><path d="M18.18,45.86 A32,32 0 0 1 18.49,43.64" stroke="#ffff00" stroke-width="2.3" fill="none"/><path d="M18.49,43.64 A32,32 0 0 1 18.95,41.46" stroke="#ffff00" stroke-width="2.3" fill="none"/><path d="M18.95,41.46 A32,32 0 0 1 19.57,39.31" stroke="#ffff00" stroke-width="2.3" fill="none"/><path d="M19.57,39.31 A32,32 0 0 1 20.33,37.21" stroke="#ffff00" stroke-width="2.3" fill="none"/><path d="M20.33,37.21 A32,32 0 0 1 21.24,35.17" stroke="#ffff00" stroke-width="2.3" fill="none"/><path d="M21.24,35.17 A32,32 0 0 1 22.29,33.20" stroke="#ffff00" stroke-width="2.3" fill="none"/><path d="M22.29,33.20 A32,32 0 0 1 23.47,31.31" stroke="#ffff00" stroke-width="2.3" fill="none"/><path d="M23.47,31.31 A32,32 0 0 1 24.78,29.50" stroke="#ffff00" stroke-width="2.3" fill="none"/><path d="M24.78,29.50 A32,32 0 0 1 26.22,27.79" stroke="#ffff00" stroke-width="2.3" fill="none"/><path d="M26.22,27.79 A32,32 0 0 1 27.77,26.18" stroke="#ffff00" stroke-width="2.3" fill="none"/><path d="M27.77,26.18 A32,32 0 0 1 29.43,24.69" stroke="#ffff00" stroke-width="2.3" fill="none"/><path d="M29.43,24.69 A32,32 0 0 1 31.19,23.31" stroke="#ffff00" stroke-width="2.3" fill="none"/><path d="M31.19,23.31 A32,32 0 0 1 33.04,22.06" stroke="#ffff00" stroke-width="2.3" fill="none"/><path d="M33.04,22.06 A32,32 0 0 1 34.98,20.95" stroke="#ffff00" stroke-width="2.3" fill="none"/><path d="M34.98,20.95 A32,32 0 0 1 36.98,19.97" stroke="#ffff00" stroke-width="2.3" fill="none"/><path d="M36.98,19.97 A32,32 0 0 1 39.06,19.13" stroke="#ffff00" stroke-width="2.3" fill="none"/><path d="M39.06,19.13 A32,32 0 0 1 41.18,18.44" stroke="#ffff00" stroke-width="2.3" fill="none"/><path d="M41.18,18.44 A32,32 0 0 1 43.35,17.90" stroke="#ffff00" stroke-width="2.3" fill="none"/><path d="M43.35,17.90 A32,32 0 0 1 45.55,17.51" stroke="#ffff00" stroke-width="2.3" fill="none"/><path d="M45.55,17.51 A32,32 0 0 1 47.77,17.28" stroke="#ffff00" stroke-width="2.3" fill="none"/><path d="M47.77,17.28 A32,32 0 0 1 50.00,17.20" stroke="#ffff00" stroke-width="2.3" fill="none"/><path d="M50.00,17.20 A32,32 0 0 1 52.23,17.28" stroke="#ffff00" stroke-width="2.3" fill="none"/><path d="M52.23,17.28 A32,32 0 0 1 54.45,17.51" stroke="#ffff00" stroke-width="2.3" fill="none"/><path d="M54.45,17.51 A32,32 0 0 1 56.65,17.90" stroke="#ffff00" stroke-width="2.3" fill="none"/><path d="M56.65,17.90 A32,32 0 0 1 58.82,18.44" stroke="#ffff00" stroke-width="2.3" fill="none"/><path d="M58.82,18.44 A32,32 0 0 1 60.94,19.13" stroke="#ffff00" stroke-width="2.3" fill="none"/><path d="M60.94,19.13 A32,32 0 0 1 63.02,19.97" stroke="#ffff00" stroke-width="2.3" fill="none"/><path d="M63.02,19.97 A32,32 0 0 1 65.02,20.95" stroke="#ffff00" stroke-width="2.3" fill="none"/><path d="M65.02,20.95 A32,32 0 0 1 66.96,22.06" stroke="#ffff00" stroke-width="2.3" fill="none"/><path d="M66.96,22.06 A32,32 0 0 1 68.81,23.31" stroke="#ffff00" stroke-width="2.3" fill="none"/><path d="M68.81,23.31 A32,32 0 0 1 70.57,24.69" stroke="#ffff00" stroke-width="2.3" fill="none"/><path d="M70.57,24.69 A32,32 0 0 1 72.23,26.18" stroke="#ffff00" stroke-width="2.3" fill="none"/><path d="M72.23,26.18 A32,32 0 0 1 73.78,27.79" stroke="#ffff00" stroke-width="2.3" fill="none"/><path d="M73.78,27.79 A32,32 0 0 1 75.22,29.50" stroke="#ffff00" stroke-width="2.3" fill="none"/><path d="M75.22,29.50 A32,32 0 0 1 76.53,31.31" stroke="#ffff00" stroke-width="2.3" fill="none"/><path d="M76.53,31.31 A32,32 0 0 1 77.71,33.20" stroke="#ffff00" stroke-width="2.3" fill="none"/><path d="M77.71,33.20 A32,32 0 0 1 78.76,35.17" stroke="#ffff00" stroke-width="2.3" fill="none"/><path d="M78.76,35.17 A32,32 0 0 1 79.67,37.21" stroke="#ffff00" stroke-width="2.3" fill="none"/><path d="M79.67,37.21 A32,32 0 0 1 80.43,39.31" stroke="#ffee00" stroke-width="2.3" fill="none"/><path d="M80.43,39.31 A32,32 0 0 1 81.05,41.46" stroke="#ffd600" stroke-width="2.3" fill="none"/><path d="M81.05,41.46 A32,32 0 0 1 81.51,43.64" stroke="#ffbe00" stroke-width="2.3" fill="none"/><path d="M81.51,43.64 A32,32 0 0 1 81.82,45.86" stroke="#ffa600" stroke-width="2.3" fill="none"/><path d="M81.82,45.86 A32,32 0 0 1 81.98,48.08" stroke="#ff8e00" stroke-width="2.3" fill="none"/><path d="M81.98,48.08 A32,32 0 0 1 81.98,50.32" stroke="#fc7c00" stroke-width="2.3" fill="none"/><path d="M81.98,50.32 A32,32 0 0 1 81.82,52.54" stroke="#f96c00" stroke-width="2.3" fill="none"/><path d="M81.82,52.54 A32,32 0 0 1 81.51,54.76" stroke="#f65b00" stroke-width="2.3" fill="none"/><path d="M81.51,54.76 A32,32 0 0 1 81.05,56.94" stroke="#f34a00" stroke-width="2.3" fill="none"/><path d="M81.05,56.94 A32,32 0 0 1 80.43,59.09" stroke="#f03a00" stroke-width="2.3" fill="none"/><path d="M80.43,59.09 A32,32 0 0 1 79.67,61.19" stroke="#ed2900" stroke-width="2.3" fill="none"/><path d="M79.67,61.19 A32,32 0 0 1 78.76,63.23" stroke="#ea1900" stroke-width="2.3" fill="none"/><path d="M78.76,63.23 A32,32 0 0 1 77.71,65.20" stroke="#e70800" stroke-width="2.3" fill="none"/><circle cx="22.29" cy="65.20" r="0.95" fill="#111"/><circle cx="20.33" cy="61.19" r="0.7" fill="#111"/><circle cx="18.95" cy="56.94" r="0.7" fill="#111"/><circle cx="18.18" cy="52.54" r="0.7" fill="#111"/><circle cx="18.02" cy="48.08" r="0.7" fill="#111"/><circle cx="18.49" cy="43.64" r="0.95" fill="#111"/><circle cx="19.57" cy="39.31" r="0.7" fill="#111"/><circle cx="21.24" cy="35.17" r="0.7" fill="#111"/><circle cx="23.47" cy="31.31" r="0.7" fill="#111"/><circle cx="26.22" cy="27.79" r="0.7" fill="#111"/><circle cx="29.43" cy="24.69" r="0.95" fill="#111"/><circle cx="33.04" cy="22.06" r="0.7" fill="#111"/><circle cx="36.98" cy="19.97" r="0.7" fill="#111"/><circle cx="41.18" cy="18.44" r="0.7" fill="#111"/><circle cx="45.55" cy="17.51" r="0.7" fill="#111"/><circle cx="50.00" cy="17.20" r="0.95" fill="#111"/><circle cx="54.45" cy="17.51" r="0.7" fill="#111"/><circle cx="58.82" cy="18.44" r="0.7" fill="#111"/><circle cx="63.02" cy="19.97" r="0.7" fill="#111"/><circle cx="66.96" cy="22.06" r="0.7" fill="#111"/><circle cx="70.57" cy="24.69" r="0.95" fill="#111"/><circle cx="73.78" cy="27.79" r="0.7" fill="#111"/><circle cx="76.53" cy="31.31" r="0.7" fill="#111"/><circle cx="78.76" cy="35.17" r="0.7" fill="#111"/><circle cx="80.43" cy="39.31" r="0.7" fill="#111"/><circle cx="81.51" cy="43.64" r="0.95" fill="#111"/><circle cx="81.98" cy="48.08" r="0.7" fill="#111"/><circle cx="81.82" cy="52.54" r="0.7" fill="#111"/><circle cx="81.05" cy="56.94" r="0.7" fill="#111"/><circle cx="79.67" cy="61.19" r="0.7" fill="#111"/><circle cx="77.71" cy="65.20" r="0.95" fill="#111"/><text x="16.9" y="69.7" font-size="7.4" fill="#333" text-anchor="middle" font-family="Liberation Sans">0</text><text x="10.4" y="44.9" font-size="7.4" fill="#333" text-anchor="middle" font-family="Liberation Sans">50</text><text x="24.4" y="21.6" font-size="7.4" fill="#333" text-anchor="middle" font-family="Liberation Sans">100</text><text x="49.6" y="12.8" font-size="7.4" fill="#333" text-anchor="middle" font-family="Liberation Sans">150</text><text x="74.4" y="21.6" font-size="7.4" fill="#333" text-anchor="middle" font-family="Liberation Sans">200</text><text x="89.7" y="44.2" font-size="7.4" fill="#333" text-anchor="middle" font-family="Liberation Sans">250</text><text x="84.6" y="71.6" font-size="7.4" fill="#333" text-anchor="middle" font-family="Liberation Sans">300</text><path d="M49.69,48.25 L76.63,40.55 L50.31,50.15 Z" fill="#111"/></svg>
<div style="left:697px;top:370px;width:100px;height:19px;background:#f0f0f0;box-shadow:1px 1px 0 #b8b2b2;"></div>
<div style="left:697px;top:371.5px;width:100px;font-size:5.5px;line-height:6px;color:#333;text-align:center;white-space:nowrap;letter-spacing:-0.15px;">Motor flow (L/min)</div>
<div style="left:697px;top:379.6px;width:100px;font-size:8.8px;line-height:11px;color:#404040;text-align:center;white-space:nowrap;font-family:'Liberation Mono',monospace;">-56.694</div>
<div style="left:811px;top:370px;width:100px;height:19px;background:#f0f0f0;box-shadow:1px 1px 0 #b8b2b2;"></div>
<div style="left:811px;top:371.5px;width:100px;font-size:5.5px;line-height:6px;color:#333;text-align:center;white-space:nowrap;letter-spacing:-0.15px;">Wheels power (kW)</div>
<div style="left:811px;top:379.6px;width:100px;font-size:8.8px;line-height:11px;color:#404040;text-align:center;white-space:nowrap;font-family:'Liberation Mono',monospace;">9.172</div>
<div style="left:697px;top:410px;width:98px;height:96px;background:#f0f0f0;box-shadow:1px 1px 0 #b8b2b2;"></div>
<svg style="position:absolute;left:697px;top:410px;" width="98" height="96" viewBox="0 0 98 96"><path d="M22.29,65.20 A32,32 0 0 1 21.24,63.23" stroke="#ffff00" stroke-width="2.3" fill="none"/><path d="M21.24,63.23 A32,32 0 0 1 20.33,61.19" stroke="#ffff00" stroke-width="2.3" fill="none"/><path d="M20.33,61.19 A32,32 0 0 1 19.57,59.09" stroke="#ffff00" stroke-width="2.3" fill="none"/><path d="M19.57,59.09 A32,32 0 0 1 18.95,56.94" stroke="#ffff00" stroke-width="2.3" fill="none"/><path d="M18.95,56.94 A32,32 0 0 1 18.49,54.76" stroke="#ffff00" stroke-width="2.3" fill="none"/><path d="M18.49,54.76 A32,32 0 0 1 18.18,52.54" stroke="#ffff00" stroke-width="2.3" fill="none"/><path d="M18.18,52.54 A32,32 0 0 1 18.02,50.32" stroke="#ffff00" stroke-width="2.3" fill="none"/><path d="M18.02,50.32 A32,32 0 0 1 18.02,48.08" stroke="#ffff00" stroke-width="2.3" fill="none"/><path d="M18.02,48.08 A32,32 0 0 1 18.18,45.86" stroke="#ffff00" stroke-width="2.3" fill="none"/><path d="M18.18,45.86 A32,32 0 0 1 18.49,43.64" stroke="#ffff00" stroke-width="2.3" fill="none"/><path d="M18.49,43.64 A32,32 0 0 1 18.95,41.46" stroke="#ffff00" stroke-width="2.3" fill="none"/><path d="M18.95,41.46 A32,32 0 0 1 19.57,39.31" stroke="#ffff00" stroke-width="2.3" fill="none"/><path d="M19.57,39.31 A32,32 0 0 1 20.33,37.21" stroke="#ffff00" stroke-width="2.3" fill="none"/><path d="M20.33,37.21 A32,32 0 0 1 21.24,35.17" stroke="#ffff00" stroke-width="2.3" fill="none"/><path d="M21.24,35.17 A32,32 0 0 1 22.29,33.20" stroke="#ffff00" stroke-width="2.3" fill="none"/><path d="M22.29,33.20 A32,32 0 0 1 23.47,31.31" stroke="#ffff00" stroke-width="2.3" fill="none"/><path d="M23.47,31.31 A32,32 0 0 1 24.78,29.50" stroke="#ffff00" stroke-width="2.3" fill="none"/><path d="M24.78,29.50 A32,32 0 0 1 26.22,27.79" stroke="#ffff00" stroke-width="2.3" fill="none"/><path d="M26.22,27.79 A32,32 0 0 1 27.77,26.18" stroke="#ffff00" stroke-width="2.3" fill="none"/><path d="M27.77,26.18 A32,32 0 0 1 29.43,24.69" stroke="#ffff00" stroke-width="2.3" fill="none"/><path d="M29.43,24.69 A32,32 0 0 1 31.19,23.31" stroke="#ffff00" stroke-width="2.3" fill="none"/><path d="M31.19,23.31 A32,32 0 0 1 33.04,22.06" stroke="#ffff00" stroke-width="2.3" fill="none"/><path d="M33.04,22.06 A32,32 0 0 1 34.98,20.95" stroke="#ffff00" stroke-width="2.3" fill="none"/><path d="M34.98,20.95 A32,32 0 0 1 36.98,19.97" stroke="#ffff00" stroke-width="2.3" fill="none"/><path d="M36.98,19.97 A32,32 0 0 1 39.06,19.13" stroke="#ffff00" stroke-width="2.3" fill="none"/><path d="M39.06,19.13 A32,32 0 0 1 41.18,18.44" stroke="#ffff00" stroke-width="2.3" fill="none"/><path d="M41.18,18.44 A32,32 0 0 1 43.35,17.90" stroke="#ffff00" stroke-width="2.3" fill="none"/><path d="M43.35,17.90 A32,32 0 0 1 45.55,17.51" stroke="#ffff00" stroke-width="2.3" fill="none"/><path d="M45.55,17.51 A32,32 0 0 1 47.77,17.28" stroke="#ffff00" stroke-width="2.3" fill="none"/><path d="M47.77,17.28 A32,32 0 0 1 50.00,17.20" stroke="#ffff00" stroke-width="2.3" fill="none"/><path d="M50.00,17.20 A32,32 0 0 1 52.23,17.28" stroke="#fff900" stroke-width="2.3" fill="none"/><path d="M52.23,17.28 A32,32 0 0 1 54.45,17.51" stroke="#ffed00" stroke-width="2.3" fill="none"/><path d="M54.45,17.51 A32,32 0 0 1 56.65,17.90" stroke="#ffe100" stroke-width="2.3" fill="none"/><path d="M56.65,17.90 A32,32 0 0 1 58.82,18.44" stroke="#ffd500" stroke-width="2.3" fill="none"/><path d="M58.82,18.44 A32,32 0 0 1 60.94,19.13" stroke="#ffc900" stroke-width="2.3" fill="none"/><path d="M60.94,19.13 A32,32 0 0 1 63.02,19.97" stroke="#ffbe00" stroke-width="2.3" fill="none"/><path d="M63.02,19.97 A32,32 0 0 1 65.02,20.95" stroke="#ffb200" stroke-width="2.3" fill="none"/><path d="M65.02,20.95 A32,32 0 0 1 66.96,22.06" stroke="#fea500" stroke-width="2.3" fill="none"/><path d="M66.96,22.06 A32,32 0 0 1 68.81,23.31" stroke="#fd9800" stroke-width="2.3" fill="none"/><path d="M68.81,23.31 A32,32 0 0 1 70.57,24.69" stroke="#fc8a00" stroke-width="2.3" fill="none"/><path d="M70.57,24.69 A32,32 0 0 1 72.23,26.18" stroke="#fb7d00" stroke-width="2.3" fill="none"/><path d="M72.23,26.18 A32,32 0 0 1 73.78,27.79" stroke="#fa6f00" stroke-width="2.3" fill="none"/><path d="M73.78,27.79 A32,32 0 0 1 75.22,29.50" stroke="#f96200" stroke-width="2.3" fill="none"/><path d="M75.22,29.50 A32,32 0 0 1 76.53,31.31" stroke="#f85400" stroke-width="2.3" fill="none"/><path d="M76.53,31.31 A32,32 0 0 1 77.71,33.20" stroke="#f74700" stroke-width="2.3" fill="none"/><path d="M77.71,33.20 A32,32 0 0 1 78.76,35.17" stroke="#f63900" stroke-width="2.3" fill="none"/><path d="M78.76,35.17 A32,32 0 0 1 79.67,37.21" stroke="#f52c00" stroke-width="2.3" fill="none"/><path d="M79.67,37.21 A32,32 0 0 1 80.43,39.31" stroke="#f42500" stroke-width="2.3" fill="none"/><path d="M80.43,39.31 A32,32 0 0 1 81.05,41.46" stroke="#f42200" stroke-width="2.3" fill="none"/><path d="M81.05,41.46 A32,32 0 0 1 81.51,43.64" stroke="#f31f00" stroke-width="2.3" fill="none"/><path d="M81.51,43.64 A32,32 0 0 1 81.82,45.86" stroke="#f31c00" stroke-width="2.3" fill="none"/><path d="M81.82,45.86 A32,32 0 0 1 81.98,48.08" stroke="#f31900" stroke-width="2.3" fill="none"/><path d="M81.98,48.08 A32,32 0 0 1 81.98,50.32" stroke="#f21600" stroke-width="2.3" fill="none"/><path d="M81.98,50.32 A32,32 0 0 1 81.82,52.54" stroke="#f21300" stroke-width="2.3" fill="none"/><path d="M81.82,52.54 A32,32 0 0 1 81.51,54.76" stroke="#f21000" stroke-width="2.3" fill="none"/><path d="M81.51,54.76 A32,32 0 0 1 81.05,56.94" stroke="#f10d00" stroke-width="2.3" fill="none"/><path d="M81.05,56.94 A32,32 0 0 1 80.43,59.09" stroke="#f10a00" stroke-width="2.3" fill="none"/><path d="M80.43,59.09 A32,32 0 0 1 79.67,61.19" stroke="#f00700" stroke-width="2.3" fill="none"/><path d="M79.67,61.19 A32,32 0 0 1 78.76,63.23" stroke="#f00400" stroke-width="2.3" fill="none"/><path d="M78.76,63.23 A32,32 0 0 1 77.71,65.20" stroke="#f00100" stroke-width="2.3" fill="none"/><circle cx="22.29" cy="65.20" r="0.95" fill="#111"/><circle cx="20.33" cy="61.19" r="0.7" fill="#111"/><circle cx="18.95" cy="56.94" r="0.7" fill="#111"/><circle cx="18.18" cy="52.54" r="0.7" fill="#111"/><circle cx="18.02" cy="48.08" r="0.7" fill="#111"/><circle cx="18.49" cy="43.64" r="0.95" fill="#111"/><circle cx="19.57" cy="39.31" r="0.7" fill="#111"/><circle cx="21.24" cy="35.17" r="0.7" fill="#111"/><circle cx="23.47" cy="31.31" r="0.7" fill="#111"/><circle cx="26.22" cy="27.79" r="0.7" fill="#111"/><circle cx="29.43" cy="24.69" r="0.95" fill="#111"/><circle cx="33.04" cy="22.06" r="0.7" fill="#111"/><circle cx="36.98" cy="19.97" r="0.7" fill="#111"/><circle cx="41.18" cy="18.44" r="0.7" fill="#111"/><circle cx="45.55" cy="17.51" r="0.7" fill="#111"/><circle cx="50.00" cy="17.20" r="0.95" fill="#111"/><circle cx="54.45" cy="17.51" r="0.7" fill="#111"/><circle cx="58.82" cy="18.44" r="0.7" fill="#111"/><circle cx="63.02" cy="19.97" r="0.7" fill="#111"/><circle cx="66.96" cy="22.06" r="0.7" fill="#111"/><circle cx="70.57" cy="24.69" r="0.95" fill="#111"/><circle cx="73.78" cy="27.79" r="0.7" fill="#111"/><circle cx="76.53" cy="31.31" r="0.7" fill="#111"/><circle cx="78.76" cy="35.17" r="0.7" fill="#111"/><circle cx="80.43" cy="39.31" r="0.7" fill="#111"/><circle cx="81.51" cy="43.64" r="0.95" fill="#111"/><circle cx="81.98" cy="48.08" r="0.7" fill="#111"/><circle cx="81.82" cy="52.54" r="0.7" fill="#111"/><circle cx="81.05" cy="56.94" r="0.7" fill="#111"/><circle cx="79.67" cy="61.19" r="0.7" fill="#111"/><circle cx="77.71" cy="65.20" r="0.95" fill="#111"/><text x="16.5" y="71.0" font-size="7.4" fill="#333" text-anchor="middle" font-family="Liberation Sans">0</text><text x="8.8" y="50.6" font-size="7.4" fill="#333" text-anchor="middle" font-family="Liberation Sans">20</text><text x="16.8" y="29.9" font-size="7.4" fill="#333" text-anchor="middle" font-family="Liberation Sans">40</text><text x="33.3" y="15.9" font-size="7.4" fill="#333" text-anchor="middle" font-family="Liberation Sans">60</text><text x="54.8" y="12.7" font-size="7.4" fill="#333" text-anchor="middle" font-family="Liberation Sans">80</text><text x="75.3" y="21.5" font-size="7.4" fill="#333" text-anchor="middle" font-family="Liberation Sans">100</text><text x="89.3" y="39.2" font-size="7.4" fill="#333" text-anchor="middle" font-family="Liberation Sans">120</text><text x="90.2" y="61.6" font-size="7.4" fill="#333" text-anchor="middle" font-family="Liberation Sans">140</text><path d="M49.80,48.22 L77.45,43.67 L50.20,50.18 Z" fill="#111"/></svg>
<div style="left:697px;top:517px;width:100px;height:20px;background:#f0f0f0;box-shadow:1px 1px 0 #b8b2b2;"></div>
<div style="left:697px;top:518.5px;width:100px;font-size:5.5px;line-height:6px;color:#333;text-align:center;white-space:nowrap;letter-spacing:-0.15px;">Pressure DOWN</div>
<div style="left:697px;top:526.6px;width:100px;font-size:8.8px;line-height:11px;color:#404040;text-align:center;white-space:nowrap;font-family:'Liberation Mono',monospace;">124.807</div>
<div style="left:437px;top:317px;width:99px;height:19px;background:#ee0a0a;box-shadow:1px 1px 0 #b8b2b2;"></div>
<div style="left:437px;top:318.5px;width:99px;font-size:5.5px;line-height:6px;color:#3a0000;text-align:center;white-space:nowrap;letter-spacing:-0.15px;">HP Pressure</div>
<div style="left:437px;top:326.6px;width:99px;font-size:8.8px;line-height:11px;color:#3a0000;text-align:center;white-space:nowrap;font-family:'Liberation Mono',monospace;">189.958</div>
<div style="left:584px;top:317px;width:100px;height:19px;background:#10cc10;box-shadow:1px 1px 0 #b8b2b2;"></div>
<div style="left:584px;top:318.5px;width:100px;font-size:5.5px;line-height:6px;color:#063006;text-align:center;white-space:nowrap;letter-spacing:-0.15px;">LP Pressure</div>
<div style="left:584px;top:326.6px;width:100px;font-size:8.8px;line-height:11px;color:#063006;text-align:center;white-space:nowrap;font-family:'Liberation Mono',monospace;">8.516</div>
<div style="left:436px;top:343px;width:97px;height:19px;background:#f0f0f0;box-shadow:1px 1px 0 #b8b2b2;"></div>
<div class="b" style="left:436px;top:343px;width:97px;font-size:7.4px;line-height:19px;color:#222;text-align:center;white-space:nowrap;">HP Volume (L)</div>
<div style="left:583px;top:343px;width:96px;height:19px;background:#f0f0f0;box-shadow:1px 1px 0 #b8b2b2;"></div>
<div class="b" style="left:583px;top:343px;width:96px;font-size:7.4px;line-height:19px;color:#222;text-align:center;white-space:nowrap;">LP Volume (L)</div>
<div style="left:456px;top:370px;width:61px;height:100px;background:#a8a8a8;box-shadow:inset 1px 1px 0 #707070, inset -1px -1px 0 #d8d8d8;"></div>
<div style="left:458px;top:378px;width:57px;height:84px;background:#c8c8c8;"></div>
<svg style="position:absolute;left:456px;top:370px;" width="61" height="100" viewBox="0 0 61 100"><rect x="2" y="82.0" width="57" height="9.4" fill="#0a8af8"/><line x1="4" y1="7.0" x2="11" y2="7.0" stroke="#111" stroke-width="1.6"/><line x1="50" y1="7.0" x2="57" y2="7.0" stroke="#111" stroke-width="1.6"/><line x1="4" y1="11.2" x2="9" y2="11.2" stroke="#111" stroke-width="1"/><line x1="52" y1="11.2" x2="57" y2="11.2" stroke="#111" stroke-width="1"/><line x1="4" y1="15.4" x2="9" y2="15.4" stroke="#111" stroke-width="1"/><line x1="52" y1="15.4" x2="57" y2="15.4" stroke="#111" stroke-width="1"/><line x1="4" y1="19.7" x2="9" y2="19.7" stroke="#111" stroke-width="1"/><line x1="52" y1="19.7" x2="57" y2="19.7" stroke="#111" stroke-width="1"/><line x1="4" y1="23.9" x2="9" y2="23.9" stroke="#111" stroke-width="1"/><line x1="52" y1="23.9" x2="57" y2="23.9" stroke="#111" stroke-width="1"/><line x1="4" y1="28.1" x2="11" y2="28.1" stroke="#111" stroke-width="1.6"/><line x1="50" y1="28.1" x2="57" y2="28.1" stroke="#111" stroke-width="1.6"/><line x1="4" y1="32.3" x2="9" y2="32.3" stroke="#111" stroke-width="1"/><line x1="52" y1="32.3" x2="57" y2="32.3" stroke="#111" stroke-width="1"/><line x1="4" y1="36.5" x2="9" y2="36.5" stroke="#111" stroke-width="1"/><line x1="52" y1="36.5" x2="57" y2="36.5" stroke="#111" stroke-width="1"/><line x1="4" y1="40.8" x2="9" y2="40.8" stroke="#111" stroke-width="1"/><line x1="52" y1="40.8" x2="57" y2="40.8" stroke="#111" stroke-width="1"/><line x1="4" y1="45.0" x2="9" y2="45.0" stroke="#111" stroke-width="1"/><line x1="52" y1="45.0" x2="57" y2="45.0" stroke="#111" stroke-width="1"/><line x1="4" y1="49.2" x2="11" y2="49.2" stroke="#111" stroke-width="1.6"/><line x1="50" y1="49.2" x2="57" y2="49.2" stroke="#111" stroke-width="1.6"/><line x1="4" y1="53.4" x2="9" y2="53.4" stroke="#111" stroke-width="1"/><line x1="52" y1="53.4" x2="57" y2="53.4" stroke="#111" stroke-width="1"/><line x1="4" y1="57.6" x2="9" y2="57.6" stroke="#111" stroke-width="1"/><line x1="52" y1="57.6" x2="57" y2="57.6" stroke="#111" stroke-width="1"/><line x1="4" y1="61.9" x2="9" y2="61.9" stroke="#111" stroke-width="1"/><line x1="52" y1="61.9" x2="57" y2="61.9" stroke="#111" stroke-width="1"/><line x1="4" y1="66.1" x2="9" y2="66.1" stroke="#111" stroke-width="1"/><line x1="52" y1="66.1" x2="57" y2="66.1" stroke="#111" stroke-width="1"/><line x1="4" y1="70.3" x2="11" y2="70.3" stroke="#111" stroke-width="1.6"/><line x1="50" y1="70.3" x2="57" y2="70.3" stroke="#111" stroke-width="1.6"/><line x1="4" y1="74.5" x2="9" y2="74.5" stroke="#111" stroke-width="1"/><line x1="52" y1="74.5" x2="57" y2="74.5" stroke="#111" stroke-width="1"/><line x1="4" y1="78.7" x2="9" y2="78.7" stroke="#111" stroke-width="1"/><line x1="52" y1="78.7" x2="57" y2="78.7" stroke="#111" stroke-width="1"/><line x1="4" y1="83.0" x2="9" y2="83.0" stroke="#111" stroke-width="1"/><line x1="52" y1="83.0" x2="57" y2="83.0" stroke="#111" stroke-width="1"/><line x1="4" y1="87.2" x2="9" y2="87.2" stroke="#111" stroke-width="1"/><line x1="52" y1="87.2" x2="57" y2="87.2" stroke="#111" stroke-width="1"/><line x1="4" y1="91.4" x2="11" y2="91.4" stroke="#111" stroke-width="1.6"/><line x1="50" y1="91.4" x2="57" y2="91.4" stroke="#111" stroke-width="1.6"/><text x="30.5" y="10.3" font-size="7.8" fill="#333" text-anchor="middle" font-family="Liberation Sans">2.0</text><text x="30.5" y="31.4" font-size="7.8" fill="#333" text-anchor="middle" font-family="Liberation Sans">1.5</text><text x="30.5" y="52.5" font-size="7.8" fill="#333" text-anchor="middle" font-family="Liberation Sans">1.0</text><text x="30.5" y="73.6" font-size="7.8" fill="#333" text-anchor="middle" font-family="Liberation Sans">0.5</text><text x="30.5" y="94.7" font-size="7.8" fill="#333" text-anchor="middle" font-family="Liberation Sans">0.0</text></svg>
<div style="left:604px;top:370px;width:61px;height:100px;background:#a8a8a8;box-shadow:inset 1px 1px 0 #707070, inset -1px -1px 0 #d8d8d8;"></div>
<div style="left:606px;top:378px;width:57px;height:84px;background:#c8c8c8;"></div>
<svg style="position:absolute;left:604px;top:370px;" width="61" height="100" viewBox="0 0 61 100"><rect x="2" y="34.0" width="57" height="57.4" fill="#0a8af8"/><line x1="4" y1="7.0" x2="11" y2="7.0" stroke="#111" stroke-width="1.6"/><line x1="50" y1="7.0" x2="57" y2="7.0" stroke="#111" stroke-width="1.6"/><line x1="4" y1="11.7" x2="9" y2="11.7" stroke="#111" stroke-width="1"/><line x1="52" y1="11.7" x2="57" y2="11.7" stroke="#111" stroke-width="1"/><line x1="4" y1="16.4" x2="9" y2="16.4" stroke="#111" stroke-width="1"/><line x1="52" y1="16.4" x2="57" y2="16.4" stroke="#111" stroke-width="1"/><line x1="4" y1="21.1" x2="11" y2="21.1" stroke="#111" stroke-width="1.6"/><line x1="50" y1="21.1" x2="57" y2="21.1" stroke="#111" stroke-width="1.6"/><line x1="4" y1="25.8" x2="9" y2="25.8" stroke="#111" stroke-width="1"/><line x1="52" y1="25.8" x2="57" y2="25.8" stroke="#111" stroke-width="1"/><line x1="4" y1="30.4" x2="9" y2="30.4" stroke="#111" stroke-width="1"/><line x1="52" y1="30.4" x2="57" y2="30.4" stroke="#111" stroke-width="1"/><line x1="4" y1="35.1" x2="11" y2="35.1" stroke="#111" stroke-width="1.6"/><line x1="50" y1="35.1" x2="57" y2="35.1" stroke="#111" stroke-width="1.6"/><line x1="4" y1="39.8" x2="9" y2="39.8" stroke="#111" stroke-width="1"/><line x1="52" y1="39.8" x2="57" y2="39.8" stroke="#111" stroke-width="1"/><line x1="4" y1="44.5" x2="9" y2="44.5" stroke="#111" stroke-width="1"/><line x1="52" y1="44.5" x2="57" y2="44.5" stroke="#111" stroke-width="1"/><line x1="4" y1="49.2" x2="11" y2="49.2" stroke="#111" stroke-width="1.6"/><line x1="50" y1="49.2" x2="57" y2="49.2" stroke="#111" stroke-width="1.6"/><line x1="4" y1="53.9" x2="9" y2="53.9" stroke="#111" stroke-width="1"/><line x1="52" y1="53.9" x2="57" y2="53.9" stroke="#111" stroke-width="1"/><line x1="4" y1="58.6" x2="9" y2="58.6" stroke="#111" stroke-width="1"/><line x1="52" y1="58.6" x2="57" y2="58.6" stroke="#111" stroke-width="1"/><line x1="4" y1="63.3" x2="11" y2="63.3" stroke="#111" stroke-width="1.6"/><line x1="50" y1="63.3" x2="57" y2="63.3" stroke="#111" stroke-width="1.6"/><line x1="4" y1="68.0" x2="9" y2="68.0" stroke="#111" stroke-width="1"/><line x1="52" y1="68.0" x2="57" y2="68.0" stroke="#111" stroke-width="1"/><line x1="4" y1="72.6" x2="9" y2="72.6" stroke="#111" stroke-width="1"/><line x1="52" y1="72.6" x2="57" y2="72.6" stroke="#111" stroke-width="1"/><line x1="4" y1="77.3" x2="11" y2="77.3" stroke="#111" stroke-width="1.6"/><line x1="50" y1="77.3" x2="57" y2="77.3" stroke="#111" stroke-width="1.6"/><line x1="4" y1="82.0" x2="9" y2="82.0" stroke="#111" stroke-width="1"/><line x1="52" y1="82.0" x2="57" y2="82.0" stroke="#111" stroke-width="1"/><line x1="4" y1="86.7" x2="9" y2="86.7" stroke="#111" stroke-width="1"/><line x1="52" y1="86.7" x2="57" y2="86.7" stroke="#111" stroke-width="1"/><line x1="4" y1="91.4" x2="11" y2="91.4" stroke="#111" stroke-width="1.6"/><line x1="50" y1="91.4" x2="57" y2="91.4" stroke="#111" stroke-width="1.6"/><text x="30.5" y="10.3" font-size="7.8" fill="#333" text-anchor="middle" font-family="Liberation Sans">3.0</text><text x="30.5" y="24.4" font-size="7.8" fill="#333" text-anchor="middle" font-family="Liberation Sans">2.5</text><text x="30.5" y="38.4" font-size="7.8" fill="#333" text-anchor="middle" font-family="Liberation Sans">2.0</text><text x="30.5" y="52.5" font-size="7.8" fill="#333" text-anchor="middle" font-family="Liberation Sans">1.5</text><text x="30.5" y="66.6" font-size="7.8" fill="#333" text-anchor="middle" font-family="Liberation Sans">1.0</text><text x="30.5" y="80.6" font-size="7.8" fill="#333" text-anchor="middle" font-family="Liberation Sans">0.5</text><text x="30.5" y="94.7" font-size="7.8" fill="#333" text-anchor="middle" font-family="Liberation Sans">0.0</text></svg>
<div style="left:523px;top:189px;width:81px;height:46px;background:linear-gradient(#fafafa,#e4e4e4);border-right:1px solid #c8c8c8;border-bottom:1px solid #888;box-sizing:border-box;"></div>
<div style="left:525px;top:191px;width:77px;height:12px;background:linear-gradient(#f8f8f8,#e6e6e6 50%,#d8d8d8);border:1px solid #a8a8a8;border-radius:2px;box-sizing:border-box;"></div>
<div class="b" style="left:525px;top:192px;width:77px;font-size:7.7px;line-height:12px;color:#222;text-align:center;white-space:nowrap;">Stop</div>
<div style="left:525px;top:206px;width:77px;height:12px;background:linear-gradient(#f8f8f8,#e6e6e6 50%,#d8d8d8);border:1px solid #a8a8a8;border-radius:2px;box-sizing:border-box;"></div>
<div class="b" style="left:525px;top:207px;width:77px;font-size:7.7px;line-height:12px;color:#222;text-align:center;white-space:nowrap;">Pause</div>
<div style="left:525px;top:221px;width:77px;height:12px;background:linear-gradient(#f8f8f8,#e6e6e6 50%,#d8d8d8);border:1px solid #a8a8a8;border-radius:2px;box-sizing:border-box;"></div>
<div class="b" style="left:525px;top:222px;width:77px;font-size:7.7px;line-height:12px;color:#222;text-align:center;white-space:nowrap;">Run</div>
<svg style="position:absolute;left:517px;top:182px;" width="92" height="58" viewBox="0 0 92 58"><rect x="2.5" y="2.5" width="6" height="6" fill="#ddd" stroke="#888" stroke-width="0.8"/><path d="M4 9 v1 h1" stroke="#2a6fd8" fill="none"/><path d="M83 5 h5 v5" stroke="#2a6fd8" stroke-width="1.2" fill="none"/><path d="M4 49 v5 h5" stroke="#2a6fd8" stroke-width="1.2" fill="none"/><path d="M83 54 h5 v-5" stroke="#2a6fd8" stroke-width="1.2" fill="none"/></svg>
<div style="left:169px;top:464px;width:132px;height:16px;background:#e4e4e4;box-shadow:inset 2px 2px 0 #707070, inset -1px -1px 0 #c8c8c8;"></div>
<div style="left:298px;top:466px;width:1px;height:13px;background:#50b050;"></div>
<div style="left:189px;top:490px;width:96px;height:19px;background:#f0f0f0;box-shadow:1px 1px 0 #b8b2b2;"></div>
<div class="b" style="left:189px;top:491.5px;width:96px;font-size:7.4px;line-height:8.3px;color:#222;text-align:center;white-space:nowrap;">Reversible pump<br>discplacement</div>
<div style="left:825px;top:470px;width:132px;height:18px;background:#e4e4e4;box-shadow:inset 2px 2px 0 #707070, inset -1px -1px 0 #c8c8c8;"></div>
<div style="left:913px;top:472px;width:42px;height:15px;background:#00dd00;"></div>
<div style="left:838px;top:497px;width:96px;height:19px;background:#f0f0f0;box-shadow:1px 1px 0 #b8b2b2;"></div>
<div class="b" style="left:838px;top:498.5px;width:96px;font-size:7.4px;line-height:8.3px;color:#222;text-align:center;white-space:nowrap;">Reversible motor<br>displacement</div>
<div style="left:791px;top:145.5px;font-size:25.05px;line-height:28px;color:#111;text-align:left;white-space:nowrap;">- Normal propelling stage -</div>
<svg style="position:absolute;left:870px;top:240px;" width="120" height="80" viewBox="0 0 120 80"><path d="M56.5,44.30000000000001 L33.92,71.69 A35.5,35.5 0 1 1 79.08,71.69 Z" fill="#1c1c1c"/><line x1="34.93" y1="65.87" x2="32.46" y2="68.34" stroke="#f0f0f0" stroke-width="1"/><line x1="32.68" y1="58.05" x2="27.06" y2="61.30" stroke="#f0f0f0" stroke-width="1.8"/><line x1="27.04" y1="52.19" x2="23.66" y2="53.10" stroke="#f0f0f0" stroke-width="1"/><line x1="26.00" y1="44.30" x2="22.50" y2="44.30" stroke="#f0f0f0" stroke-width="1"/><line x1="27.04" y1="36.41" x2="23.66" y2="35.50" stroke="#f0f0f0" stroke-width="1"/><line x1="32.68" y1="30.55" x2="27.06" y2="27.30" stroke="#f0f0f0" stroke-width="1.8"/><line x1="34.93" y1="22.73" x2="32.46" y2="20.26" stroke="#f0f0f0" stroke-width="1"/><line x1="41.25" y1="17.89" x2="39.50" y2="14.86" stroke="#f0f0f0" stroke-width="1"/><line x1="48.61" y1="14.84" x2="47.70" y2="11.46" stroke="#f0f0f0" stroke-width="1"/><line x1="56.50" y1="16.80" x2="56.50" y2="10.30" stroke="#f0f0f0" stroke-width="1.8"/><line x1="64.39" y1="14.84" x2="65.30" y2="11.46" stroke="#f0f0f0" stroke-width="1"/><line x1="71.75" y1="17.89" x2="73.50" y2="14.86" stroke="#f0f0f0" stroke-width="1"/><line x1="78.07" y1="22.73" x2="80.54" y2="20.26" stroke="#f0f0f0" stroke-width="1"/><line x1="80.32" y1="30.55" x2="85.94" y2="27.30" stroke="#f0f0f0" stroke-width="1.8"/><line x1="85.96" y1="36.41" x2="89.34" y2="35.50" stroke="#f0f0f0" stroke-width="1"/><line x1="87.00" y1="44.30" x2="90.50" y2="44.30" stroke="#f0f0f0" stroke-width="1"/><line x1="85.96" y1="52.19" x2="89.34" y2="53.10" stroke="#f0f0f0" stroke-width="1"/><line x1="80.32" y1="58.05" x2="85.94" y2="61.30" stroke="#f0f0f0" stroke-width="1.8"/><line x1="78.07" y1="65.87" x2="80.54" y2="68.34" stroke="#f0f0f0" stroke-width="1"/><text x="56" y="29.3" font-size="9.2" fill="#e8e8e8" text-anchor="middle" font-family="Liberation Sans">0.0</text><text x="43" y="39.3" font-size="9.2" fill="#e8e8e8" text-anchor="middle" font-family="Liberation Sans">-0.8</text><text x="70" y="39.3" font-size="9.2" fill="#e8e8e8" text-anchor="middle" font-family="Liberation Sans">0.8</text><text x="42.5" y="53.8" font-size="9.2" fill="#e8e8e8" text-anchor="middle" font-family="Liberation Sans">-1.6</text><text x="71.5" y="53.8" font-size="9.2" fill="#e8e8e8" text-anchor="middle" font-family="Liberation Sans">1.6</text><path d="M54.23,43.26 L70.24,14.30 L58.77,45.34 Z" fill="#f00000"/><text x="55.5" y="63.30000000000001" font-size="5.5" fill="#4a6a70" text-anchor="middle" font-family="Liberation Sans">m/s²</text></svg>
<div style="left:878px;top:323px;width:96px;height:19px;background:#f0f0f0;box-shadow:1px 1px 0 #b8b2b2;"></div>
<div class="b" style="left:878px;top:323px;width:96px;font-size:7.4px;line-height:19px;color:#222;text-align:center;white-space:nowrap;">Acceleration (m/s²)</div>
<div style="left:1025px;top:249px;width:96px;height:71px;background:#e2dede;box-shadow:inset 2px 2px 0 #f8f8f8, inset -3px -3px 0 #9a9a9a;"></div>
<svg style="position:absolute;left:1025px;top:249px;" width="96" height="71" viewBox="0 0 96 71"><path d="M13.29,66.20 A41,41 0 1 1 84.31,66.20 L75.21,60.95 A30.5,30.5 0 1 0 22.39,60.95 Z" fill="#00d400"/><line x1="21.52" y1="61.45" x2="13.29" y2="66.20" stroke="#111" stroke-width="1.6"/><line x1="16.93" y1="57.55" x2="12.71" y2="59.12" stroke="#111" stroke-width="0.8"/><line x1="15.40" y1="52.07" x2="10.98" y2="52.91" stroke="#111" stroke-width="0.8"/><line x1="14.81" y1="46.41" x2="10.31" y2="46.51" stroke="#111" stroke-width="0.8"/><line x1="15.16" y1="40.73" x2="10.71" y2="40.08" stroke="#111" stroke-width="0.8"/><line x1="18.84" y1="35.97" x2="9.81" y2="33.03" stroke="#111" stroke-width="1.6"/><line x1="18.67" y1="29.95" x2="14.68" y2="27.86" stroke="#111" stroke-width="0.8"/><line x1="21.72" y1="25.14" x2="18.13" y2="22.42" stroke="#111" stroke-width="0.8"/><line x1="25.53" y1="20.92" x2="22.44" y2="17.63" stroke="#111" stroke-width="0.8"/><line x1="29.98" y1="17.38" x2="27.49" y2="13.63" stroke="#111" stroke-width="0.8"/><line x1="35.99" y1="16.92" x2="32.12" y2="8.24" stroke="#111" stroke-width="1.6"/><line x1="40.34" y1="12.77" x2="39.23" y2="8.41" stroke="#111" stroke-width="0.8"/><line x1="45.95" y1="11.82" x2="45.58" y2="7.34" stroke="#111" stroke-width="0.8"/><line x1="51.65" y1="11.82" x2="52.02" y2="7.34" stroke="#111" stroke-width="0.8"/><line x1="57.26" y1="12.77" x2="58.37" y2="8.41" stroke="#111" stroke-width="0.8"/><line x1="61.61" y1="16.92" x2="65.48" y2="8.24" stroke="#111" stroke-width="1.6"/><line x1="67.62" y1="17.38" x2="70.11" y2="13.63" stroke="#111" stroke-width="0.8"/><line x1="72.07" y1="20.92" x2="75.16" y2="17.63" stroke="#111" stroke-width="0.8"/><line x1="75.88" y1="25.14" x2="79.47" y2="22.42" stroke="#111" stroke-width="0.8"/><line x1="78.93" y1="29.95" x2="82.92" y2="27.86" stroke="#111" stroke-width="0.8"/><line x1="78.76" y1="35.97" x2="87.79" y2="33.03" stroke="#111" stroke-width="1.6"/><line x1="82.44" y1="40.73" x2="86.89" y2="40.08" stroke="#111" stroke-width="0.8"/><line x1="82.79" y1="46.41" x2="87.29" y2="46.51" stroke="#111" stroke-width="0.8"/><line x1="82.20" y1="52.07" x2="86.62" y2="52.91" stroke="#111" stroke-width="0.8"/><line x1="80.67" y1="57.55" x2="84.89" y2="59.12" stroke="#111" stroke-width="0.8"/><line x1="76.08" y1="61.45" x2="84.31" y2="66.20" stroke="#111" stroke-width="1.6"/><text x="38.59999999999991" y="27.30000000000001" font-size="9.6" fill="#333" text-anchor="middle" font-family="Liberation Sans">-1</text><text x="58" y="27.30000000000001" font-size="9.6" fill="#333" text-anchor="middle" font-family="Liberation Sans">1</text><text x="26.299999999999955" y="41.30000000000001" font-size="9.6" fill="#333" text-anchor="middle" font-family="Liberation Sans">-3</text><text x="71.79999999999995" y="41.30000000000001" font-size="9.6" fill="#333" text-anchor="middle" font-family="Liberation Sans">3</text><text x="27.90000000000009" y="60.80000000000001" font-size="9.6" fill="#333" text-anchor="middle" font-family="Liberation Sans">-5</text><text x="70" y="60.80000000000001" font-size="9.6" fill="#333" text-anchor="middle" font-family="Liberation Sans">5</text><text x="48.799999999999955" y="52.19999999999999" font-size="5.5" fill="#445" text-anchor="middle" font-family="Liberation Sans">m/s</text><path d="M49.38,43.17 L87.77,54.70 L48.22,48.23 Z" fill="#f00000"/></svg>
<div style="left:1025px;top:323px;width:96px;height:19px;background:#f0f0f0;box-shadow:1px 1px 0 #b8b2b2;"></div>
<div class="b" style="left:1025px;top:323px;width:96px;font-size:7.4px;line-height:19px;color:#222;text-align:center;white-space:nowrap;">Vehicle velocity (m/s)</div>
<div style="left:938px;top:356px;width:142px;height:82px;background:#e4e4e4;box-shadow:inset 1px 1px 0 #fafafa, inset -2px -2px 0 #8a8a8a;"></div>
<svg style="position:absolute;left:938px;top:356px;" width="142" height="82" viewBox="0 0 142 82"><path d="M32.00,46.71 A40,40 0 0 1 32.09,43.78 L37.08,44.12 A35,35 0 0 0 37.00,46.68 Z" fill="#28dc00"/><path d="M32.07,44.20 A40,40 0 0 1 32.34,41.28 L37.30,41.93 A35,35 0 0 0 37.06,44.49 Z" fill="#2adc00"/><path d="M32.29,41.69 A40,40 0 0 1 32.75,38.80 L37.65,39.76 A35,35 0 0 0 37.25,42.30 Z" fill="#2cdd00"/><path d="M32.67,39.21 A40,40 0 0 1 33.31,36.35 L38.15,37.62 A35,35 0 0 0 37.59,40.12 Z" fill="#2edd00"/><path d="M33.21,36.76 A40,40 0 0 1 34.02,33.94 L38.77,35.51 A35,35 0 0 0 38.05,37.97 Z" fill="#30de00"/><path d="M33.89,34.34 A40,40 0 0 1 34.89,31.58 L39.53,33.45 A35,35 0 0 0 38.66,35.86 Z" fill="#31de00"/><path d="M34.73,31.97 A40,40 0 0 1 35.90,29.28 L40.41,31.43 A35,35 0 0 0 39.39,33.79 Z" fill="#33de00"/><path d="M35.72,29.66 A40,40 0 0 1 37.05,27.05 L41.42,29.48 A35,35 0 0 0 40.25,31.76 Z" fill="#35df00"/><path d="M36.85,27.41 A40,40 0 0 1 38.34,24.89 L42.55,27.59 A35,35 0 0 0 41.24,29.80 Z" fill="#37df00"/><path d="M38.12,25.24 A40,40 0 0 1 39.76,22.82 L43.79,25.78 A35,35 0 0 0 42.35,27.90 Z" fill="#38e000"/><path d="M39.52,23.16 A40,40 0 0 1 41.31,20.84 L45.15,24.05 A35,35 0 0 0 43.58,26.08 Z" fill="#3ae000"/><path d="M41.05,21.16 A40,40 0 0 1 42.99,18.97 L46.61,22.41 A35,35 0 0 0 44.92,24.33 Z" fill="#3ce100"/><path d="M42.70,19.27 A40,40 0 0 1 44.77,17.20 L48.17,20.86 A35,35 0 0 0 46.36,22.67 Z" fill="#3ee100"/><path d="M44.47,17.49 A40,40 0 0 1 46.66,15.55 L49.83,19.42 A35,35 0 0 0 47.91,21.11 Z" fill="#40e200"/><path d="M46.34,15.81 A40,40 0 0 1 48.66,14.02 L51.58,18.08 A35,35 0 0 0 49.55,19.65 Z" fill="#41e200"/><path d="M48.32,14.26 A40,40 0 0 1 50.74,12.62 L53.40,16.85 A35,35 0 0 0 51.28,18.29 Z" fill="#43e200"/><path d="M50.39,12.84 A40,40 0 0 1 52.91,11.35 L55.30,15.74 A35,35 0 0 0 53.09,17.05 Z" fill="#45e300"/><path d="M52.55,11.55 A40,40 0 0 1 55.16,10.22 L57.26,14.75 A35,35 0 0 0 54.98,15.92 Z" fill="#47e300"/><path d="M54.78,10.40 A40,40 0 0 1 57.47,9.23 L59.29,13.89 A35,35 0 0 0 56.93,14.91 Z" fill="#48e400"/><path d="M57.08,9.39 A40,40 0 0 1 59.84,8.39 L61.36,13.16 A35,35 0 0 0 58.95,14.03 Z" fill="#4ae400"/><path d="M59.44,8.52 A40,40 0 0 1 62.26,7.71 L63.47,12.55 A35,35 0 0 0 61.01,13.27 Z" fill="#4ce500"/><path d="M61.85,7.81 A40,40 0 0 1 64.71,7.17 L65.62,12.09 A35,35 0 0 0 63.12,12.65 Z" fill="#4ee500"/><path d="M64.30,7.25 A40,40 0 0 1 67.19,6.79 L67.80,11.75 A35,35 0 0 0 65.26,12.15 Z" fill="#50e600"/><path d="M66.78,6.84 A40,40 0 0 1 69.70,6.57 L69.99,11.56 A35,35 0 0 0 67.43,11.80 Z" fill="#5ce600"/><path d="M69.28,6.59 A40,40 0 0 1 72.21,6.50 L72.18,11.50 A35,35 0 0 0 69.62,11.58 Z" fill="#69e700"/><path d="M71.79,6.50 A40,40 0 0 1 74.72,6.59 L74.38,11.58 A35,35 0 0 0 71.82,11.50 Z" fill="#76e800"/><path d="M74.30,6.57 A40,40 0 0 1 77.22,6.84 L76.57,11.80 A35,35 0 0 0 74.01,11.56 Z" fill="#83e900"/><path d="M76.81,6.79 A40,40 0 0 1 79.70,7.25 L78.74,12.15 A35,35 0 0 0 76.20,11.75 Z" fill="#90ea00"/><path d="M79.29,7.17 A40,40 0 0 1 82.15,7.81 L80.88,12.65 A35,35 0 0 0 78.38,12.09 Z" fill="#9cea00"/><path d="M81.74,7.71 A40,40 0 0 1 84.56,8.52 L82.99,13.27 A35,35 0 0 0 80.53,12.55 Z" fill="#a9eb00"/><path d="M84.16,8.39 A40,40 0 0 1 86.92,9.39 L85.05,14.03 A35,35 0 0 0 82.64,13.16 Z" fill="#b6ec00"/><path d="M86.53,9.23 A40,40 0 0 1 89.22,10.40 L87.07,14.91 A35,35 0 0 0 84.71,13.89 Z" fill="#c3ed00"/><path d="M88.84,10.22 A40,40 0 0 1 91.45,11.55 L89.02,15.92 A35,35 0 0 0 86.74,14.75 Z" fill="#d0ee00"/><path d="M91.09,11.35 A40,40 0 0 1 93.61,12.84 L90.91,17.05 A35,35 0 0 0 88.70,15.74 Z" fill="#dcee00"/><path d="M93.26,12.62 A40,40 0 0 1 95.68,14.26 L92.72,18.29 A35,35 0 0 0 90.60,16.85 Z" fill="#e9ef00"/><path d="M95.34,14.02 A40,40 0 0 1 97.66,15.81 L94.45,19.65 A35,35 0 0 0 92.42,18.08 Z" fill="#f1ea00"/><path d="M97.34,15.55 A40,40 0 0 1 99.53,17.49 L96.09,21.11 A35,35 0 0 0 94.17,19.42 Z" fill="#f3de00"/><path d="M99.23,17.20 A40,40 0 0 1 101.30,19.27 L97.64,22.67 A35,35 0 0 0 95.83,20.86 Z" fill="#f5d100"/><path d="M101.01,18.97 A40,40 0 0 1 102.95,21.16 L99.08,24.33 A35,35 0 0 0 97.39,22.41 Z" fill="#f7c500"/><path d="M102.69,20.84 A40,40 0 0 1 104.48,23.16 L100.42,26.08 A35,35 0 0 0 98.85,24.05 Z" fill="#f9b900"/><path d="M104.24,22.82 A40,40 0 0 1 105.88,25.24 L101.65,27.90 A35,35 0 0 0 100.21,25.78 Z" fill="#fbad00"/><path d="M105.66,24.89 A40,40 0 0 1 107.15,27.41 L102.76,29.80 A35,35 0 0 0 101.45,27.59 Z" fill="#fda200"/><path d="M106.95,27.05 A40,40 0 0 1 108.28,29.66 L103.75,31.76 A35,35 0 0 0 102.58,29.48 Z" fill="#ff9600"/><path d="M108.10,29.28 A40,40 0 0 1 109.27,31.97 L104.61,33.79 A35,35 0 0 0 103.59,31.43 Z" fill="#fd8100"/><path d="M109.11,31.58 A40,40 0 0 1 110.11,34.34 L105.34,35.86 A35,35 0 0 0 104.47,33.45 Z" fill="#fb6d00"/><path d="M109.98,33.94 A40,40 0 0 1 110.79,36.76 L105.95,37.97 A35,35 0 0 0 105.23,35.51 Z" fill="#f95900"/><path d="M110.69,36.35 A40,40 0 0 1 111.33,39.21 L106.41,40.12 A35,35 0 0 0 105.85,37.62 Z" fill="#f74500"/><path d="M111.25,38.80 A40,40 0 0 1 111.71,41.69 L106.75,42.30 A35,35 0 0 0 106.35,39.76 Z" fill="#f53200"/><path d="M111.66,41.28 A40,40 0 0 1 111.93,44.20 L106.94,44.49 A35,35 0 0 0 106.70,41.93 Z" fill="#f31e00"/><path d="M111.91,43.78 A40,40 0 0 1 112.00,46.71 L107.00,46.68 A35,35 0 0 0 106.92,44.12 Z" fill="#f10900"/><line x1="37.00" y1="46.50" x2="32.00" y2="46.50" stroke="#333" stroke-width="1.2" opacity="1"/><line x1="36.11" y1="43.68" x2="33.12" y2="43.44" stroke="#333" stroke-width="0.6" opacity="0.6"/><line x1="36.44" y1="40.87" x2="33.48" y2="40.40" stroke="#333" stroke-width="0.6" opacity="0.6"/><line x1="36.99" y1="38.10" x2="34.08" y2="37.40" stroke="#333" stroke-width="0.6" opacity="0.6"/><line x1="37.76" y1="35.38" x2="34.91" y2="34.45" stroke="#333" stroke-width="0.6" opacity="0.6"/><line x1="38.74" y1="32.72" x2="35.97" y2="31.58" stroke="#333" stroke-width="0.6" opacity="0.6"/><line x1="39.92" y1="30.16" x2="37.25" y2="28.79" stroke="#333" stroke-width="0.6" opacity="0.6"/><line x1="41.30" y1="27.69" x2="38.75" y2="26.12" stroke="#333" stroke-width="0.6" opacity="0.6"/><line x1="43.68" y1="25.93" x2="39.64" y2="22.99" stroke="#333" stroke-width="1.2" opacity="1"/><line x1="44.63" y1="23.12" x2="42.34" y2="21.17" stroke="#333" stroke-width="0.6" opacity="0.6"/><line x1="46.54" y1="21.04" x2="44.42" y2="18.92" stroke="#333" stroke-width="0.6" opacity="0.6"/><line x1="48.62" y1="19.13" x2="46.67" y2="16.84" stroke="#333" stroke-width="0.6" opacity="0.6"/><line x1="50.84" y1="17.38" x2="49.08" y2="14.95" stroke="#333" stroke-width="0.6" opacity="0.6"/><line x1="53.19" y1="15.80" x2="51.62" y2="13.25" stroke="#333" stroke-width="0.6" opacity="0.6"/><line x1="55.66" y1="14.42" x2="54.29" y2="11.75" stroke="#333" stroke-width="0.6" opacity="0.6"/><line x1="58.22" y1="13.24" x2="57.08" y2="10.47" stroke="#333" stroke-width="0.6" opacity="0.6"/><line x1="61.18" y1="13.21" x2="59.64" y2="8.46" stroke="#333" stroke-width="1.2" opacity="1"/><line x1="63.60" y1="11.49" x2="62.90" y2="8.58" stroke="#333" stroke-width="0.6" opacity="0.6"/><line x1="66.37" y1="10.94" x2="65.90" y2="7.98" stroke="#333" stroke-width="0.6" opacity="0.6"/><line x1="69.18" y1="10.61" x2="68.94" y2="7.62" stroke="#333" stroke-width="0.6" opacity="0.6"/><line x1="72.00" y1="10.50" x2="72.00" y2="7.50" stroke="#333" stroke-width="0.6" opacity="0.6"/><line x1="74.82" y1="10.61" x2="75.06" y2="7.62" stroke="#333" stroke-width="0.6" opacity="0.6"/><line x1="77.63" y1="10.94" x2="78.10" y2="7.98" stroke="#333" stroke-width="0.6" opacity="0.6"/><line x1="80.40" y1="11.49" x2="81.10" y2="8.58" stroke="#333" stroke-width="0.6" opacity="0.6"/><line x1="82.82" y1="13.21" x2="84.36" y2="8.46" stroke="#333" stroke-width="1.2" opacity="1"/><line x1="85.78" y1="13.24" x2="86.92" y2="10.47" stroke="#333" stroke-width="0.6" opacity="0.6"/><line x1="88.34" y1="14.42" x2="89.71" y2="11.75" stroke="#333" stroke-width="0.6" opacity="0.6"/><line x1="90.81" y1="15.80" x2="92.38" y2="13.25" stroke="#333" stroke-width="0.6" opacity="0.6"/><line x1="93.16" y1="17.38" x2="94.92" y2="14.95" stroke="#333" stroke-width="0.6" opacity="0.6"/><line x1="95.38" y1="19.13" x2="97.33" y2="16.84" stroke="#333" stroke-width="0.6" opacity="0.6"/><line x1="97.46" y1="21.04" x2="99.58" y2="18.92" stroke="#333" stroke-width="0.6" opacity="0.6"/><line x1="99.37" y1="23.12" x2="101.66" y2="21.17" stroke="#333" stroke-width="0.6" opacity="0.6"/><line x1="100.32" y1="25.93" x2="104.36" y2="22.99" stroke="#333" stroke-width="1.2" opacity="1"/><line x1="102.70" y1="27.69" x2="105.25" y2="26.12" stroke="#333" stroke-width="0.6" opacity="0.6"/><line x1="104.08" y1="30.16" x2="106.75" y2="28.79" stroke="#333" stroke-width="0.6" opacity="0.6"/><line x1="105.26" y1="32.72" x2="108.03" y2="31.58" stroke="#333" stroke-width="0.6" opacity="0.6"/><line x1="106.24" y1="35.38" x2="109.09" y2="34.45" stroke="#333" stroke-width="0.6" opacity="0.6"/><line x1="107.01" y1="38.10" x2="109.92" y2="37.40" stroke="#333" stroke-width="0.6" opacity="0.6"/><line x1="107.56" y1="40.87" x2="110.52" y2="40.40" stroke="#333" stroke-width="0.6" opacity="0.6"/><line x1="107.89" y1="43.68" x2="110.88" y2="43.44" stroke="#333" stroke-width="0.6" opacity="0.6"/><line x1="107.00" y1="46.50" x2="112.00" y2="46.50" stroke="#333" stroke-width="1.2" opacity="1"/><line x1="31.00" y1="46.50" x2="38.00" y2="46.50" stroke="#333" stroke-width="1.6"/><line x1="113.00" y1="46.50" x2="106.00" y2="46.50" stroke="#333" stroke-width="1.6"/><text x="44.5" y="49.8" font-size="7.3" fill="#444" text-anchor="middle" font-family="Liberation Sans">0</text><text x="52" y="36.3" font-size="7.3" fill="#444" text-anchor="middle" font-family="Liberation Sans">400</text><text x="63.60000000000002" y="26.3" font-size="7.3" fill="#444" text-anchor="middle" font-family="Liberation Sans">800</text><text x="79.29999999999995" y="26.3" font-size="7.3" fill="#444" text-anchor="middle" font-family="Liberation Sans">1200</text><text x="90" y="37.3" font-size="7.3" fill="#444" text-anchor="middle" font-family="Liberation Sans">1600</text><text x="91" y="49.8" font-size="7.3" fill="#444" text-anchor="middle" font-family="Liberation Sans">2000</text><text x="73" y="64" font-size="6.8" fill="#445" text-anchor="middle" font-family="Liberation Sans">RPM</text><text x="71" y="74.8" font-size="8.2" fill="#223" text-anchor="middle" font-family="Liberation Sans">x 1000</text><path d="M70.15,45.30 L91.06,17.15 L73.85,47.70 Z" fill="#f00000"/></svg>
<div style="left:965px;top:443px;width:96px;height:19px;background:#f0f0f0;box-shadow:1px 1px 0 #b8b2b2;"></div>
<div class="b" style="left:965px;top:443px;width:96px;font-size:7.4px;line-height:19px;color:#222;text-align:center;white-space:nowrap;">Motor speed (rpm)</div>
<div style="left:14px;top:663px;width:1271px;height:99px;background:#f0f0f0;"></div>
<div style="left:14px;top:663px;width:1271px;height:14px;background:linear-gradient(#cdd9e5,#bfcddb);border-top:1px solid #a8b8c8;box-sizing:border-box;"></div>
<div class="b" style="left:17px;top:664px;font-size:7.7px;line-height:13px;color:#5a6878;text-align:left;white-space:nowrap;">Variables</div>
<svg style="position:absolute;left:1250px;top:664px;" width="35" height="13" viewBox="0 0 35 13"><path d="M3 5 h6 l-3 3z" fill="#222"/><path d="M16 2 h4 M18 2 v5 M15.5 7 h5 M18 7 v4" stroke="#222" stroke-width="1.1"/><path d="M26 3 l6 6 M32 3 l-6 6" stroke="#222" stroke-width="1.2"/></svg>
<div style="left:15px;top:677px;width:252px;height:69px;background:#fff;border:1px solid #828790;box-sizing:border-box;"></div>
<svg style="position:absolute;left:17px;top:679px;" width="50" height="60" viewBox="0 0 50 60"><rect x="4.5" y="3.5" width="6" height="6" fill="#fff" stroke="#999" stroke-width="0.8"/><path d="M6 6.5 h3" stroke="#333"/><path d="M19.5 10 v41 M19.5 16.5 h4 M19.5 28.5 h4 M19.5 40.5 h4 M19.5 51.5 h4" stroke="#bbb" stroke-width="0.8"/><rect x="16.5" y="13.5" width="6" height="6" fill="#fff" stroke="#999" stroke-width="0.8"/><path d="M18 16.5 h3 M19.5 15.0 v3" stroke="#333" stroke-width="0.8"/><rect x="16.5" y="37.5" width="6" height="6" fill="#fff" stroke="#999" stroke-width="0.8"/><path d="M18 40.5 h3 M19.5 39.0 v3" stroke="#333" stroke-width="0.8"/><rect x="16.5" y="49.5" width="6" height="6" fill="#fff" stroke="#999" stroke-width="0.8"/><path d="M18 52.5 h3 M19.5 51.0 v3" stroke="#333" stroke-width="0.8"/></svg>
<svg style="position:absolute;left:30px;top:678px;" width="11" height="11" viewBox="0 0 11 11"><rect x="1" y="1" width="9" height="9" fill="#c8dcf8" stroke="#4a7ad0" stroke-width="0.8"/><text x="5.5" y="8.5" font-size="7" fill="#222" text-anchor="middle" font-family="Liberation Sans">{a}</text></svg>
<svg style="position:absolute;left:42px;top:690px;" width="11" height="11" viewBox="0 0 11 11"><rect x="1" y="1" width="9" height="9" fill="#c8dcf8" stroke="#4a7ad0" stroke-width="0.8"/><text x="5.5" y="8.5" font-size="7" fill="#222" text-anchor="middle" font-family="Liberation Sans">{a}</text></svg>
<svg style="position:absolute;left:42px;top:702px;" width="11" height="11" viewBox="0 0 11 11"><rect x="1" y="1" width="9" height="9" fill="#c8dcf8" stroke="#4a7ad0" stroke-width="0.8"/><text x="5.5" y="8.5" font-size="7" fill="#222" text-anchor="middle" font-family="Liberation Sans">{a}</text></svg>
<svg style="position:absolute;left:42px;top:714px;" width="11" height="11" viewBox="0 0 11 11"><rect x="1" y="1" width="9" height="9" fill="#c8dcf8" stroke="#4a7ad0" stroke-width="0.8"/><text x="5.5" y="8.5" font-size="7" fill="#222" text-anchor="middle" font-family="Liberation Sans">{a}</text></svg>
<svg style="position:absolute;left:42px;top:726px;" width="11" height="11" viewBox="0 0 11 11"><rect x="1" y="1" width="9" height="9" fill="#c8dcf8" stroke="#4a7ad0" stroke-width="0.8"/><text x="5.5" y="8.5" font-size="7" fill="#222" text-anchor="middle" font-family="Liberation Sans">{a}</text></svg>
<div style="left:43px;top:678px;width:92px;height:11px;background:#ececec;"></div>
<div class="b" style="left:44px;top:677.5px;font-size:7.7px;line-height:11px;color:#111;text-align:left;white-space:nowrap;">hrb_valves_control_hil.sdf</div>
<div class="b" style="left:56px;top:689.5px;font-size:7.7px;line-height:11px;color:#111;text-align:left;white-space:nowrap;">Model Root</div>
<div class="b" style="left:56px;top:701.5px;font-size:7.7px;line-height:11px;color:#111;text-align:left;white-space:nowrap;">Labels</div>
<div class="b" style="left:56px;top:713.5px;font-size:7.7px;line-height:11px;color:#111;text-align:left;white-space:nowrap;">User Variables</div>
<div class="b" style="left:56px;top:725.5px;font-size:7.7px;line-height:11px;color:#111;text-align:left;white-space:nowrap;">Task Info</div>
<div style="left:269px;top:677px;width:751px;height:69px;background:#fff;border:1px solid #828790;box-sizing:border-box;"></div>
<div style="left:270px;top:678px;width:739px;height:14px;background:linear-gradient(#ffffff,#f2f3f5);border-bottom:1px solid #d5d5d5;box-sizing:border-box;"></div>
<div style="left:359px;top:678px;width:1px;height:14px;background:#e2e3e5;"></div>
<div style="left:373px;top:678px;width:1px;height:14px;background:#e2e3e5;"></div>
<div style="left:645px;top:678px;width:1px;height:14px;background:#e2e3e5;"></div>
<div style="left:738px;top:678px;width:1px;height:14px;background:#e2e3e5;"></div>
<div style="left:820px;top:678px;width:1px;height:14px;background:#e2e3e5;"></div>
<div style="left:977px;top:678px;width:1px;height:14px;background:#e2e3e5;"></div>
<div class="b" style="left:274px;top:679px;font-size:7.7px;line-height:14px;color:#222;text-align:left;white-space:nowrap;">Variable Type</div>
<div class="b" style="left:364px;top:679px;font-size:7.7px;line-height:14px;color:#222;text-align:left;white-space:nowrap;">C</div>
<div class="b" style="left:378px;top:679px;font-size:7.7px;line-height:14px;color:#222;text-align:left;white-space:nowrap;">Variable</div>
<div class="b" style="left:648.5px;top:679px;font-size:7.7px;line-height:14px;color:#222;text-align:left;white-space:nowrap;">Block</div>
<div class="b" style="left:742px;top:679px;font-size:7.7px;line-height:14px;color:#222;text-align:left;white-space:nowrap;">Platform/Device</div>
<div class="b" style="left:824.5px;top:679px;font-size:7.7px;line-height:14px;color:#222;text-align:left;white-space:nowrap;">Description</div>
<div class="b" style="left:981.5px;top:679px;font-size:7.7px;line-height:14px;color:#222;text-align:left;white-space:nowrap;">Unit</div>
<div style="left:415px;top:679px;font-size:6px;line-height:12px;color:#555;text-align:left;white-space:nowrap;">⁄</div>
<div style="left:359px;top:692.0px;width:1px;height:13px;background:#ececec;"></div>
<div style="left:373px;top:692.0px;width:1px;height:13px;background:#ececec;"></div>
<div style="left:645px;top:692.0px;width:1px;height:13px;background:#ececec;"></div>
<div style="left:738px;top:692.0px;width:1px;height:13px;background:#ececec;"></div>
<div style="left:820px;top:692.0px;width:1px;height:13px;background:#ececec;"></div>
<div style="left:977px;top:692.0px;width:1px;height:13px;background:#ececec;"></div>
<svg style="position:absolute;left:271px;top:692.5px;" width="24" height="13" viewBox="0 0 24 13"><rect x="2.5" y="2.5" width="8" height="8" fill="#ececec" stroke="#9a9a9a" stroke-width="0.8"/><rect x="14" y="2.5" width="5.5" height="7" fill="#58a0e8" stroke="#222" stroke-width="0.9"/><rect x="15.3" y="4" width="3" height="2" fill="#fff"/><path d="M19.5 6 h2" stroke="#111" stroke-width="1"/><path d="M21 4 l2.2 2 l-2.2 2z" fill="#111"/></svg>
<div class="b" style="left:295px;top:693.5px;font-size:7.9px;line-height:13px;color:#111;text-align:left;white-space:nowrap;">Measurement</div>
<div class="b" style="left:378px;top:693.5px;font-size:7.9px;line-height:13px;color:#111;text-align:left;white-space:nowrap;">currentTime</div>
<div class="b" style="left:742px;top:693.5px;font-size:7.9px;line-height:13px;color:#111;text-align:left;white-space:nowrap;">Platform</div>
<div class="b" style="left:824.5px;top:693.5px;font-size:7.9px;line-height:13px;color:#111;text-align:left;white-space:nowrap;">Current simulation time. Increments wit...</div>
<div class="b" style="left:981.5px;top:693.5px;font-size:7.9px;line-height:13px;color:#111;text-align:left;white-space:nowrap;">s</div>
<div style="left:270px;top:704.7px;width:739px;height:13px;background:#f0f0f0;"></div>
<div style="left:359px;top:704.7px;width:1px;height:13px;background:#ececec;"></div>
<div style="left:373px;top:704.7px;width:1px;height:13px;background:#ececec;"></div>
<div style="left:645px;top:704.7px;width:1px;height:13px;background:#ececec;"></div>
<div style="left:738px;top:704.7px;width:1px;height:13px;background:#ececec;"></div>
<div style="left:820px;top:704.7px;width:1px;height:13px;background:#ececec;"></div>
<div style="left:977px;top:704.7px;width:1px;height:13px;background:#ececec;"></div>
<svg style="position:absolute;left:271px;top:705.2px;" width="24" height="13" viewBox="0 0 24 13"><rect x="2.5" y="2.5" width="8" height="8" fill="#ececec" stroke="#9a9a9a" stroke-width="0.8"/><rect x="14" y="2.5" width="5.5" height="7" fill="#58a0e8" stroke="#222" stroke-width="0.9"/><rect x="15.3" y="4" width="3" height="2" fill="#fff"/><path d="M19.5 6 h2" stroke="#111" stroke-width="1"/><path d="M21 4 l2.2 2 l-2.2 2z" fill="#111"/></svg>
<div class="b" style="left:295px;top:706.2px;font-size:7.9px;line-height:13px;color:#111;text-align:left;white-space:nowrap;">Measurement</div>
<div class="b" style="left:378px;top:706.2px;font-size:7.9px;line-height:13px;color:#111;text-align:left;white-space:nowrap;">errorNumber</div>
<div class="b" style="left:742px;top:706.2px;font-size:7.9px;line-height:13px;color:#111;text-align:left;white-space:nowrap;">Platform</div>
<div class="b" style="left:824.5px;top:706.2px;font-size:7.9px;line-height:13px;color:#111;text-align:left;white-space:nowrap;">Error number of last error message (zero...</div>
<div class="b" style="left:981.5px;top:706.2px;font-size:7.9px;line-height:13px;color:#111;text-align:left;white-space:nowrap;">-</div>
<div style="left:359px;top:717.4px;width:1px;height:13px;background:#ececec;"></div>
<div style="left:373px;top:717.4px;width:1px;height:13px;background:#ececec;"></div>
<div style="left:645px;top:717.4px;width:1px;height:13px;background:#ececec;"></div>
<div style="left:738px;top:717.4px;width:1px;height:13px;background:#ececec;"></div>
<div style="left:820px;top:717.4px;width:1px;height:13px;background:#ececec;"></div>
<div style="left:977px;top:717.4px;width:1px;height:13px;background:#ececec;"></div>
<svg style="position:absolute;left:271px;top:717.9px;" width="24" height="13" viewBox="0 0 24 13"><rect x="2.5" y="2.5" width="8" height="8" fill="#ececec" stroke="#9a9a9a" stroke-width="0.8"/><rect x="14" y="2.5" width="5.5" height="7" fill="#58a0e8" stroke="#222" stroke-width="0.9"/><rect x="15.3" y="4" width="3" height="2" fill="#fff"/><path d="M19.5 6 h2" stroke="#111" stroke-width="1"/><path d="M21 4 l2.2 2 l-2.2 2z" fill="#111"/></svg>
<div class="b" style="left:295px;top:718.9px;font-size:7.9px;line-height:13px;color:#111;text-align:left;white-space:nowrap;">Measurement</div>
<div class="b" style="left:378px;top:718.9px;font-size:7.9px;line-height:13px;color:#111;text-align:left;white-space:nowrap;">finalTime</div>
<div class="b" style="left:742px;top:718.9px;font-size:7.9px;line-height:13px;color:#111;text-align:left;white-space:nowrap;">Platform</div>
<div class="b" style="left:824.5px;top:718.9px;font-size:7.9px;line-height:13px;color:#111;text-align:left;white-space:nowrap;">Simulation stop time. When reached, si...</div>
<div class="b" style="left:981.5px;top:718.9px;font-size:7.9px;line-height:13px;color:#111;text-align:left;white-space:nowrap;">s</div>
<svg style="position:absolute;left:271px;top:730px;" width="20" height="4" viewBox="0 0 20 4"><rect x="2.5" y="1" width="8" height="4" fill="#fafafa" stroke="#8a8a8a" stroke-width="0.8"/></svg>
<div style="left:270px;top:734px;width:739px;height:11px;background:#f0f0f0;"></div>
<div style="left:279px;top:735px;width:650px;height:9px;background:linear-gradient(#f4f4f4,#dadada 50%,#c6c6c6);border:1px solid #b4b4b4;border-radius:2px;box-sizing:border-box;"></div>
<svg style="position:absolute;left:270px;top:734px;" width="739" height="11" viewBox="0 0 739 11"><path d="M5 5.5 l3-3 v6z" fill="#555"/><path d="M333 3 v4 M335 3 v4 M337 3 v4" stroke="#777" stroke-width="0.7"/><path d="M732 2.5 l3 3 l-3 3z" fill="#555"/></svg>
<div style="left:1009px;top:678px;width:10px;height:56px;background:#f0f0f0;"></div>
<div style="left:1010px;top:688px;width:8px;height:12px;background:linear-gradient(90deg,#f4f4f4,#dadada);border:1px solid #a8a8a8;border-radius:2px;box-sizing:border-box;"></div>
<svg style="position:absolute;left:1009px;top:678px;" width="10" height="56" viewBox="0 0 10 56"><path d="M2 6 l3-3 l3 3z" fill="#444"/><path d="M2 51 h6 l-3 3z" fill="#444"/><path d="M3 14.5 h4 M3 16.5 h4 M3 18.5 h4" stroke="#666" stroke-width="0.6"/></svg>
<div style="left:1022px;top:677px;width:262px;height:69px;background:#fff;border:1px solid #828790;border-left:2px solid #828790;box-sizing:border-box;"></div>
<div style="left:1024px;top:678px;width:259px;height:14px;background:linear-gradient(#ffffff,#f2f3f5);border-bottom:1px solid #d5d5d5;box-sizing:border-box;"></div>
<div class="b" style="left:1028px;top:679px;font-size:7.7px;line-height:14px;color:#222;text-align:left;white-space:nowrap;">Checked Variables</div>
<div style="left:1101px;top:679px;font-size:6px;line-height:12px;color:#555;text-align:left;white-space:nowrap;">⁄</div>
<div style="left:1024px;top:705px;width:259px;height:1px;background:#ececec;"></div>
<div style="left:1024px;top:718px;width:259px;height:1px;background:#ececec;"></div>
<div style="left:1024px;top:731px;width:259px;height:1px;background:#ececec;"></div>
<div style="left:14px;top:746px;width:1271px;height:16px;background:#f0f0f0;"></div>
<div style="left:16px;top:747px;width:51px;height:14px;background:#fbfbfb;border:1px solid #b8bcc4;border-top:none;box-sizing:border-box;"></div>
<svg style="position:absolute;left:18px;top:748px;" width="265" height="12" viewBox="0 0 265 12"><g><rect x="1" y="2" width="8" height="8" fill="#b8ccec" stroke="#5a7ab8" stroke-width="0.7"/><path d="M2 9 l3-4 l3 3" stroke="#3a5a98" fill="none" stroke-width="0.8"/></g><g transform="translate(52,0)"><ellipse cx="5" cy="6" rx="4" ry="5" fill="#3a8ae0"/><path d="M2 6 q2 -2 3 0 t3 0" stroke="#e0e020" fill="none"/></g><g transform="translate(155,0)"><rect x="0" y="3" width="10" height="6" fill="#3a6a3a" stroke="#222" stroke-width="0.6"/></g><g transform="translate(231,0)"><path d="M1 6 q0 -5 5 -4 l2 0 v4 h-4 q-3 0 -3 3z" fill="#3a6ab8"/><path d="M9 6 q0 5 -5 4 l-2 0 v-4 h4 q3 0 3 -3z" fill="#f0c020"/><circle cx="9" cy="3" r="1.8" fill="#e03030"/></g></svg>
<div class="b" style="left:33px;top:748px;font-size:7.7px;line-height:14px;color:#111;text-align:left;white-space:nowrap;">Variables</div>
<div class="b" style="left:82px;top:748px;font-size:7.7px;line-height:14px;color:#666;text-align:left;white-space:nowrap;">Measurement Data Pool</div>
<div style="left:169px;top:749px;width:1px;height:10px;background:#aaa;"></div>
<div class="b" style="left:186px;top:748px;font-size:7.7px;line-height:14px;color:#666;text-align:left;white-space:nowrap;">Platform/Device</div>
<div style="left:245px;top:749px;width:1px;height:10px;background:#aaa;"></div>
<div class="b" style="left:261px;top:748px;font-size:7.7px;line-height:14px;color:#666;text-align:left;white-space:nowrap;">Interpreter</div>
<div style="left:302px;top:749px;width:1px;height:10px;background:#aaa;"></div>
<svg style="position:absolute;left:304px;top:748px;" width="13" height="12" viewBox="0 0 13 12"><rect x="1" y="1" width="9" height="9" fill="#e8eef8" stroke="#4a6ab0" stroke-width="0.8"/><circle cx="9" cy="9" r="3" fill="#e02020"/><path d="M7.5 7.5 l3 3 M10.5 7.5 l-3 3" stroke="#fff" stroke-width="0.8"/></svg>
<div class="b" style="left:318px;top:748px;font-size:7.7px;line-height:14px;color:#666;text-align:left;white-space:nowrap;">Log</div>
<div style="left:0px;top:762px;width:1285px;height:15px;background:linear-gradient(#dbe6f3,#c8d8ea);border-top:1px solid #b8c8da;box-sizing:border-box;"></div>
<div style="left:966px;top:764px;width:174px;height:12px;background:#0000ff;"></div>
<div class="b" style="left:968px;top:765px;font-size:7.7px;line-height:12px;color:#fff;text-align:left;white-space:nowrap;">Measuring</div>
<div style="left:1142px;top:764px;width:34px;height:12px;background:#0000ff;"></div>
<div style="left:1179px;top:764px;width:33px;height:12px;background:#0000ff;"></div>
<div style="left:1214px;top:764px;width:35px;height:12px;background:#fff;"></div>
<div class="b" style="left:1216px;top:765px;font-size:7.7px;line-height:12px;color:#111;text-align:left;white-space:nowrap;">34.8 s</div>
<div style="left:1252px;top:764px;width:30px;height:12px;background:#9fb4d0;"></div>
<div class="b" style="left:1253px;top:765px;font-size:7.7px;line-height:12px;color:#111;text-align:left;white-space:nowrap;"><span style="color:#c8d8ec">R: 25</span>.2 s</div>
<div style="left:0px;top:777px;width:1285px;height:27px;background:linear-gradient(90deg,#1b3e66 0%,#1d4470 40%,#2a5788 60%,#1d4470 80%,#16365c 100%);border-top:1px solid #4a6a90;box-sizing:border-box;"></div>
<svg style="position:absolute;left:0px;top:777px;" width="300" height="27" viewBox="0 0 300 27"><circle cx="18" cy="13.5" r="11" fill="#2f7acc" stroke="#8ac0ff" stroke-width="0.8"/><path d="M12 9 l5 -1 v5 h-5z" fill="#f04a20"/><path d="M18 8 l6 -1 v6 h-6z" fill="#70c030"/><path d="M12 14 h5 v5 l-5 -1z" fill="#20a0f0"/><path d="M18 14 h6 v6 l-6 -1z" fill="#ffc020"/>
<text x="59.5" y="23.5" font-size="27" font-weight="bold" fill="#38a8f0" font-family="Liberation Sans" text-anchor="middle">e</text><ellipse cx="59.5" cy="14" rx="11" ry="5" transform="rotate(-35 59.5 14)" stroke="#f0c828" stroke-width="1.4" fill="none" stroke-dasharray="22,6,40"/>
<rect x="91" y="6" width="20" height="15" fill="#f0d890" stroke="#c0a050" stroke-width="0.8"/><rect x="93" y="4" width="8" height="3" fill="#e0c070"/><rect x="95" y="14" width="12" height="6" fill="#60a0d8"/>
<rect x="132" y="6" width="17" height="16" rx="2" fill="#4aa0e0"/><circle cx="140" cy="14" r="5.5" fill="#fff"/><path d="M138.5 11 l4 3 l-4 3z" fill="#f08020"/>
<rect x="165" y="1" width="37" height="25" rx="2" fill="#5a7aa0" stroke="#8aa8c8" stroke-width="0.8" opacity="0.8"/><rect x="172" y="4" width="19" height="19" rx="2" fill="#e8e8e8"/><path d="M175 18 q3 -5 5 0 t6 -2" stroke="#333" fill="none"/><circle cx="187" cy="9" r="4" fill="#fff" stroke="#333" stroke-width="0.8"/>
<rect x="206" y="1" width="37" height="25" rx="2" fill="#4a6a90" stroke="#7a98b8" stroke-width="0.8" opacity="0.8"/><ellipse cx="222" cy="15" rx="9" ry="7" fill="#c8d8e8"/><circle cx="218" cy="13" r="1.5" fill="#e03030"/><circle cx="222" cy="11" r="1.5" fill="#30a030"/><circle cx="219" cy="17" r="1.5" fill="#3060e0"/><path d="M224 20 l9 -15" stroke="#e0a030" stroke-width="2"/></svg>
<div class="b" style="left:1145px;top:783px;font-size:7.7px;line-height:12px;color:#e8eef6;text-align:left;white-space:nowrap;">FR</div>
<svg style="position:absolute;left:1160px;top:780px;" width="70" height="20" viewBox="0 0 70 20"><path d="M6 12 l3 -3 l3 3z" fill="#fff"/><rect x="22" y="6" width="7" height="10" fill="#fff"/><rect x="24" y="8" width="3" height="6" fill="#234"/><rect x="39" y="7" width="10" height="8" fill="none" stroke="#fff" stroke-width="1.2"/><path d="M55 8 h3 l4 -3 v12 l-4 -3 h-3z" fill="#fff"/><circle cx="62" cy="14" r="3" fill="#e02020"/></svg>
<div class="b" style="left:1226px;top:779.5px;width:50px;font-size:8.0px;line-height:13px;color:#fff;text-align:center;white-space:nowrap;">11:21 AM</div>
<div class="b" style="left:1226px;top:790.5px;width:50px;font-size:8.0px;line-height:13px;color:#fff;text-align:center;white-space:nowrap;">3/22/2017</div>
<div style="left:1280px;top:777px;width:5px;height:27px;background:#2a4a70;border-left:1px solid #5a7aa0;box-sizing:border-box;"></div>
</body></html>
